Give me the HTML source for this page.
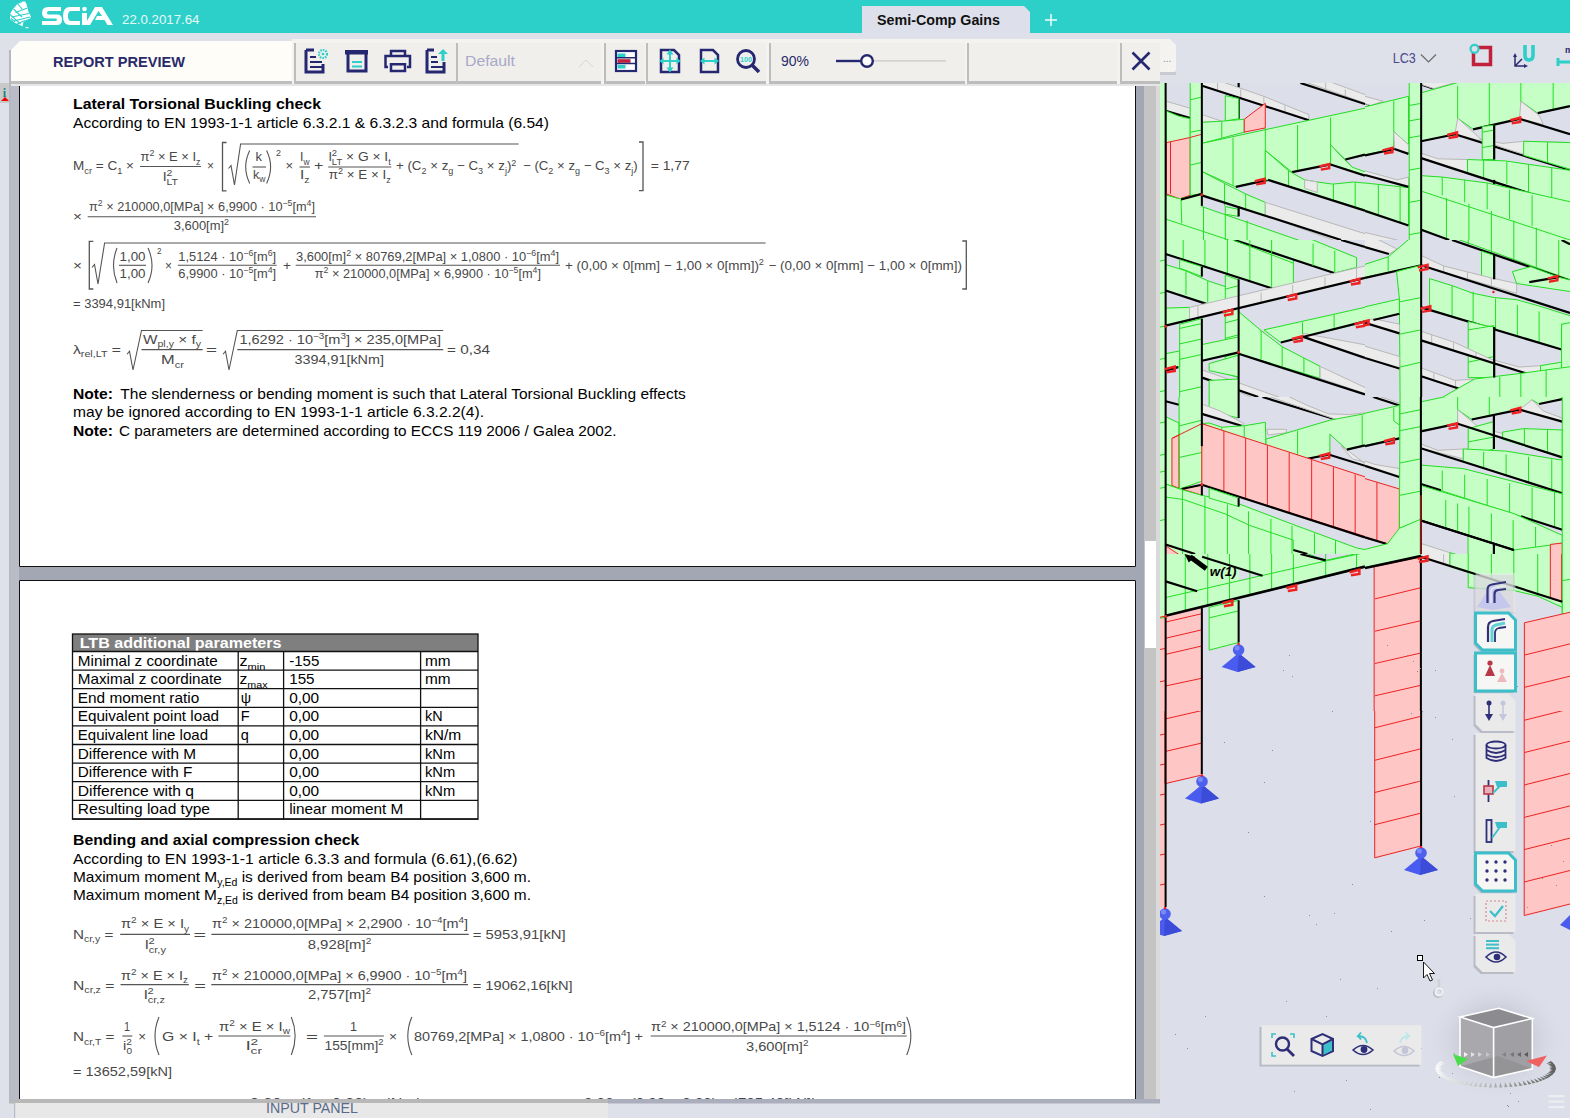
<!DOCTYPE html>
<html><head><meta charset="utf-8"><style>
html,body{margin:0;padding:0;width:1570px;height:1118px;overflow:hidden;background:#DEE0EA;}
svg{display:block;font-family:"Liberation Sans",sans-serif;}
</style></head><body>
<svg width="1570" height="1118" viewBox="0 0 1570 1118">
<rect x="1160" y="83" width="410" height="1035" fill="#DCDEE9" />
<clipPath id="cc1"><rect x="1160" y="83" width="205" height="157"/></clipPath>
<g clip-path="url(#cc1)"><g transform="translate(1160,83) scale(0.14041)">
<polyline points="560,0 560,255" fill="none" stroke="#000" stroke-width="2.2" vector-effect="non-scaling-stroke"/>
<polygon points="300,-20 410,-20 740,95 1060,225 1060,265 300,20" fill="#EBEBEB" stroke="#B8B8B8" stroke-width="1" vector-effect="non-scaling-stroke"/>
<polyline points="410,0 410,55" fill="none" stroke="#B8B8B8" stroke-width="1" vector-effect="non-scaling-stroke"/>
<polyline points="575,45 575,110" fill="none" stroke="#B8B8B8" stroke-width="1" vector-effect="non-scaling-stroke"/>
<polyline points="740,95 740,165" fill="none" stroke="#B8B8B8" stroke-width="1" vector-effect="non-scaling-stroke"/>
<polyline points="890,160 890,215" fill="none" stroke="#B8B8B8" stroke-width="1" vector-effect="non-scaling-stroke"/>
<polygon points="1180,-20 1480,90 1480,150 1000,-20" fill="#EBEBEB" stroke="#B8B8B8" stroke-width="1" vector-effect="non-scaling-stroke"/>
<polyline points="1180,0 1180,55" fill="none" stroke="#B8B8B8" stroke-width="1" vector-effect="non-scaling-stroke"/>
<polyline points="1320,45 1320,105" fill="none" stroke="#B8B8B8" stroke-width="1" vector-effect="non-scaling-stroke"/>
<polyline points="1000,0 1460,150" fill="none" stroke="#000" stroke-width="2.2" vector-effect="non-scaling-stroke"/>
<polyline points="300,20 1060,265" fill="none" stroke="#000" stroke-width="2.2" vector-effect="non-scaling-stroke"/>
<polygon points="45,130 215,180 215,255 45,200" fill="#EBEBEB" stroke="#B8B8B8" stroke-width="1" vector-effect="non-scaling-stroke"/>
<polyline points="45,200 215,250" fill="none" stroke="#000" stroke-width="2.2" vector-effect="non-scaling-stroke"/>
<polygon points="-20,-20 40,-20 40,1138 -20,1138" fill="#C6FFC6" stroke="#22DD22" stroke-width="1" vector-effect="non-scaling-stroke"/>
<polygon points="45,200 130,235 215,255 215,800 140,825 45,790" fill="#C6FFC6" stroke="#22DD22" stroke-width="1" vector-effect="non-scaling-stroke"/>
<polygon points="45,425 215,388 215,800 140,825 45,790" fill="#FFC6C6" stroke="#EE2222" stroke-width="1" vector-effect="non-scaling-stroke"/>
<polyline points="75,420 75,790" fill="none" stroke="#EE2222" stroke-width="1" vector-effect="non-scaling-stroke"/>
<polygon points="215,-20 298,-20 298,790 215,800" fill="#C6FFC6" stroke="#22DD22" stroke-width="1" vector-effect="non-scaling-stroke"/>
<polyline points="215,120 298,100" fill="none" stroke="#22DD22" stroke-width="1" vector-effect="non-scaling-stroke"/>
<polyline points="215,350 298,335" fill="none" stroke="#22DD22" stroke-width="1" vector-effect="non-scaling-stroke"/>
<polyline points="215,585 298,565" fill="none" stroke="#22DD22" stroke-width="1" vector-effect="non-scaling-stroke"/>
<polyline points="215,388 298,365" fill="none" stroke="#EE2222" stroke-width="1" vector-effect="non-scaling-stroke"/>
<polygon points="465,90 560,110 560,255 465,270" fill="#C6FFC6" stroke="#22DD22" stroke-width="1" vector-effect="non-scaling-stroke"/>
<polygon points="300,225 440,272 300,280" fill="#EBEBEB" stroke="#B8B8B8" stroke-width="1" vector-effect="non-scaling-stroke"/>
<polygon points="300,280 440,272 600,258 600,350 300,430" fill="#C6FFC6" stroke="#22DD22" stroke-width="1" vector-effect="non-scaling-stroke"/>
<polygon points="600,258 750,145 750,320 600,350" fill="#FFC6C6" stroke="#EE2222" stroke-width="1" vector-effect="non-scaling-stroke"/>
<polygon points="298,430 1480,175 1480,510 1320,545 1215,440 1215,580 940,635 750,480 750,690 540,740 298,630" fill="#C6FFC6" stroke="#22DD22" stroke-width="1" vector-effect="non-scaling-stroke"/>
<polyline points="440,272 440,390" fill="none" stroke="#22DD22" stroke-width="1" vector-effect="non-scaling-stroke"/>
<polyline points="520,390 520,730" fill="none" stroke="#22DD22" stroke-width="1" vector-effect="non-scaling-stroke"/>
<polyline points="980,300 980,630" fill="none" stroke="#22DD22" stroke-width="1" vector-effect="non-scaling-stroke"/>
<polygon points="1215,440 1370,600 1320,545 1215,580" fill="#EBEBEB" stroke="#B8B8B8" stroke-width="1" vector-effect="non-scaling-stroke"/>
<polygon points="1215,440 1280,510 1370,600 1480,640 1480,660 1215,580" fill="#C6FFC6" stroke="#22DD22" stroke-width="1" vector-effect="non-scaling-stroke"/>
<polyline points="540,740 770,690" fill="none" stroke="#000" stroke-width="2.2" vector-effect="non-scaling-stroke"/>
<polyline points="940,635 1215,580" fill="none" stroke="#000" stroke-width="2.2" vector-effect="non-scaling-stroke"/>
<polyline points="1320,545 1460,510" fill="none" stroke="#000" stroke-width="2.2" vector-effect="non-scaling-stroke"/>
<polygon points="750,480 915,625 1030,690 1120,705 1230,720 1380,705 1480,715 1480,910 770,690 750,690" fill="#C6FFC6" stroke="#22DD22" stroke-width="1" vector-effect="non-scaling-stroke"/>
<polygon points="1030,690 1120,705 1120,780 1030,750" fill="#EBEBEB" stroke="#B8B8B8" stroke-width="1" vector-effect="non-scaling-stroke"/>
<polyline points="915,625 915,735" fill="none" stroke="#22DD22" stroke-width="1" vector-effect="non-scaling-stroke"/>
<polyline points="1235,720 1235,830" fill="none" stroke="#22DD22" stroke-width="1" vector-effect="non-scaling-stroke"/>
<polyline points="1390,705 1390,880" fill="none" stroke="#22DD22" stroke-width="1" vector-effect="non-scaling-stroke"/>
<polyline points="750,320 750,480" fill="none" stroke="#22DD22" stroke-width="1" vector-effect="non-scaling-stroke"/>
<polyline points="1215,245 1215,440" fill="none" stroke="#22DD22" stroke-width="1" vector-effect="non-scaling-stroke"/>
<polyline points="770,690 1460,910" fill="none" stroke="#000" stroke-width="2.2" vector-effect="non-scaling-stroke"/>
<polyline points="1215,580 1460,660" fill="none" stroke="#000" stroke-width="2.2" vector-effect="non-scaling-stroke"/>
<polygon points="298,630 460,715 610,790 750,850 750,945 298,800" fill="#C6FFC6" stroke="#22DD22" stroke-width="1" vector-effect="non-scaling-stroke"/>
<polyline points="460,715 460,875" fill="none" stroke="#22DD22" stroke-width="1" vector-effect="non-scaling-stroke"/>
<polyline points="610,790 610,895" fill="none" stroke="#22DD22" stroke-width="1" vector-effect="non-scaling-stroke"/>
<polygon points="750,850 1480,1080 1480,1138 1290,1138 750,945" fill="#EBEBEB" stroke="#B8B8B8" stroke-width="1" vector-effect="non-scaling-stroke"/>
<polyline points="298,800 1290,1118" fill="none" stroke="#000" stroke-width="2.2" vector-effect="non-scaling-stroke"/>
<polygon points="40,797 140,825 298,790 298,880 1040,1138 40,1138" fill="#C6FFC6" stroke="#22DD22" stroke-width="1" vector-effect="non-scaling-stroke"/>
<polyline points="150,830 155,1000" fill="none" stroke="#22DD22" stroke-width="1" vector-effect="non-scaling-stroke"/>
<polyline points="40,969 490,1118" fill="none" stroke="#22DD22" stroke-width="1" vector-effect="non-scaling-stroke"/>
<polyline points="310,880 310,1118" fill="none" stroke="#22DD22" stroke-width="1" vector-effect="non-scaling-stroke"/>
<polyline points="465,930 465,1118" fill="none" stroke="#22DD22" stroke-width="1" vector-effect="non-scaling-stroke"/>
<polyline points="620,980 620,1118" fill="none" stroke="#22DD22" stroke-width="1" vector-effect="non-scaling-stroke"/>
<polygon points="465,880 560,900 560,950 465,935" fill="#C6FFC6" stroke="#22DD22" stroke-width="1" vector-effect="non-scaling-stroke"/>
<polyline points="150,830 298,790" fill="none" stroke="#000" stroke-width="2.2" vector-effect="non-scaling-stroke"/>
<polyline points="40,0 40,1118" fill="none" stroke="#000" stroke-width="2.0" vector-effect="non-scaling-stroke"/>
<polyline points="298,0 298,875" fill="none" stroke="#000" stroke-width="2.0" vector-effect="non-scaling-stroke"/>
<polyline points="560,880 560,950" fill="none" stroke="#000" stroke-width="2.2" vector-effect="non-scaling-stroke"/>
<path d="M675,700 L745,682 L745,712 L685,722" fill="none" stroke="#EE2222" stroke-width="2.5" vector-effect="non-scaling-stroke"/>
<path d="M1135,595 L1205,577 L1205,607 L1145,617" fill="none" stroke="#EE2222" stroke-width="2.5" vector-effect="non-scaling-stroke"/>
<circle cx="298" cy="795" r="10" fill="#E22"/>
</g></g>
<clipPath id="cc2"><rect x="1365" y="83" width="205" height="157"/></clipPath>
<g clip-path="url(#cc2)"><g transform="translate(1365,83) scale(0.14041)">
<polyline points="400,10 490,40" fill="none" stroke="#000" stroke-width="2.2" vector-effect="non-scaling-stroke"/>
<polyline points="0,140 40,160" fill="none" stroke="#000" stroke-width="2.2" vector-effect="non-scaling-stroke"/>
<polygon points="-20,90 130,130 40,160 -20,140" fill="#EBEBEB" stroke="#B8B8B8" stroke-width="1" vector-effect="non-scaling-stroke"/>
<polygon points="400,-20 700,-20 490,40 400,10" fill="#EBEBEB" stroke="#B8B8B8" stroke-width="1" vector-effect="non-scaling-stroke"/>
<polygon points="-20,175 310,95 310,440 205,345 205,470 -20,515" fill="#C6FFC6" stroke="#22DD22" stroke-width="1" vector-effect="non-scaling-stroke"/>
<polygon points="205,345 310,440 310,505 210,470" fill="#EBEBEB" stroke="#B8B8B8" stroke-width="1" vector-effect="non-scaling-stroke"/>
<polyline points="205,125 205,345" fill="none" stroke="#22DD22" stroke-width="1" vector-effect="non-scaling-stroke"/>
<polyline points="0,515 210,470" fill="none" stroke="#000" stroke-width="2.2" vector-effect="non-scaling-stroke"/>
<polyline points="210,470 310,505" fill="none" stroke="#000" stroke-width="2.2" vector-effect="non-scaling-stroke"/>
<polygon points="400,70 720,-20 1480,-20 1480,165 1230,215 1110,130 1110,255 770,330 660,250 660,365 400,415" fill="#C6FFC6" stroke="#22DD22" stroke-width="1" vector-effect="non-scaling-stroke"/>
<polygon points="660,250 820,395 820,410 640,365" fill="#EBEBEB" stroke="#B8B8B8" stroke-width="1" vector-effect="non-scaling-stroke"/>
<polygon points="1110,130 1240,230 1270,295 1100,255" fill="#EBEBEB" stroke="#B8B8B8" stroke-width="1" vector-effect="non-scaling-stroke"/>
<polyline points="660,20 660,250" fill="none" stroke="#22DD22" stroke-width="1" vector-effect="non-scaling-stroke"/>
<polyline points="885,0 885,300" fill="none" stroke="#22DD22" stroke-width="1" vector-effect="non-scaling-stroke"/>
<polyline points="1110,0 1110,130" fill="none" stroke="#22DD22" stroke-width="1" vector-effect="non-scaling-stroke"/>
<polyline points="1340,0 1340,190" fill="none" stroke="#22DD22" stroke-width="1" vector-effect="non-scaling-stroke"/>
<polyline points="400,415 640,365" fill="none" stroke="#000" stroke-width="2.2" vector-effect="non-scaling-stroke"/>
<polyline points="770,330 1100,255" fill="none" stroke="#000" stroke-width="2.2" vector-effect="non-scaling-stroke"/>
<polyline points="1230,215 1460,165" fill="none" stroke="#000" stroke-width="2.2" vector-effect="non-scaling-stroke"/>
<polyline points="640,365 1460,620" fill="none" stroke="#000" stroke-width="2.2" vector-effect="non-scaling-stroke"/>
<polyline points="1100,255 1460,365" fill="none" stroke="#000" stroke-width="2.2" vector-effect="non-scaling-stroke"/>
<polygon points="820,400 980,430 1130,415 1480,425 1480,620 980,460" fill="#EBEBEB" stroke="#B8B8B8" stroke-width="1" vector-effect="non-scaling-stroke"/>
<polygon points="1130,415 1480,425 1480,620 1130,515" fill="#C6FFC6" stroke="#22DD22" stroke-width="1" vector-effect="non-scaling-stroke"/>
<polyline points="1300,420 1300,565" fill="none" stroke="#22DD22" stroke-width="1" vector-effect="non-scaling-stroke"/>
<polygon points="835,310 920,300 920,545 835,545" fill="#C6FFC6" stroke="#22DD22" stroke-width="1" vector-effect="non-scaling-stroke"/>
<polyline points="835,350 920,335" fill="none" stroke="#22DD22" stroke-width="1" vector-effect="non-scaling-stroke"/>
<polyline points="835,460 920,445" fill="none" stroke="#22DD22" stroke-width="1" vector-effect="non-scaling-stroke"/>
<polygon points="400,500 520,540 730,545 730,645 400,535" fill="#EBEBEB" stroke="#B8B8B8" stroke-width="1" vector-effect="non-scaling-stroke"/>
<polygon points="730,545 1000,555 1480,625 1480,880 730,645" fill="#C6FFC6" stroke="#22DD22" stroke-width="1" vector-effect="non-scaling-stroke"/>
<polyline points="845,548 845,680" fill="none" stroke="#22DD22" stroke-width="1" vector-effect="non-scaling-stroke"/>
<polyline points="1010,560 1010,720" fill="none" stroke="#22DD22" stroke-width="1" vector-effect="non-scaling-stroke"/>
<polyline points="1165,580 1165,775" fill="none" stroke="#22DD22" stroke-width="1" vector-effect="non-scaling-stroke"/>
<polyline points="1330,605 1330,835" fill="none" stroke="#22DD22" stroke-width="1" vector-effect="non-scaling-stroke"/>
<polyline points="400,535 1460,880" fill="none" stroke="#000" stroke-width="2.2" vector-effect="non-scaling-stroke"/>
<polygon points="400,660 550,670 870,712 1480,850 1480,1138 640,1138 400,1040" fill="#C6FFC6" stroke="#22DD22" stroke-width="1" vector-effect="non-scaling-stroke"/>
<polyline points="550,670 550,800" fill="none" stroke="#22DD22" stroke-width="1" vector-effect="non-scaling-stroke"/>
<polyline points="710,690 710,850" fill="none" stroke="#22DD22" stroke-width="1" vector-effect="non-scaling-stroke"/>
<polyline points="870,712 870,900" fill="none" stroke="#22DD22" stroke-width="1" vector-effect="non-scaling-stroke"/>
<polyline points="400,770 1460,1118" fill="none" stroke="#22DD22" stroke-width="1" vector-effect="non-scaling-stroke"/>
<polyline points="1030,760 1030,970" fill="none" stroke="#22DD22" stroke-width="1" vector-effect="non-scaling-stroke"/>
<polyline points="1190,800 1190,1020" fill="none" stroke="#22DD22" stroke-width="1" vector-effect="non-scaling-stroke"/>
<polyline points="580,820 580,1118" fill="none" stroke="#22DD22" stroke-width="1" vector-effect="non-scaling-stroke"/>
<polyline points="740,860 740,1118" fill="none" stroke="#22DD22" stroke-width="1" vector-effect="non-scaling-stroke"/>
<polyline points="900,910 900,1118" fill="none" stroke="#22DD22" stroke-width="1" vector-effect="non-scaling-stroke"/>
<polyline points="1060,980 1060,1118" fill="none" stroke="#22DD22" stroke-width="1" vector-effect="non-scaling-stroke"/>
<polyline points="1220,1030 1220,1118" fill="none" stroke="#22DD22" stroke-width="1" vector-effect="non-scaling-stroke"/>
<polygon points="-20,620 230,690 310,670 310,740 -20,655" fill="#EBEBEB" stroke="#B8B8B8" stroke-width="1" vector-effect="non-scaling-stroke"/>
<polygon points="-20,710 310,745 310,1015 -20,910" fill="#C6FFC6" stroke="#22DD22" stroke-width="1" vector-effect="non-scaling-stroke"/>
<polyline points="95,725 95,940" fill="none" stroke="#22DD22" stroke-width="1" vector-effect="non-scaling-stroke"/>
<polyline points="250,740 250,990" fill="none" stroke="#22DD22" stroke-width="1" vector-effect="non-scaling-stroke"/>
<polygon points="-20,1060 310,1138 -20,1138" fill="#EBEBEB" stroke="#B8B8B8" stroke-width="1" vector-effect="non-scaling-stroke"/>
<polyline points="0,655 310,740" fill="none" stroke="#000" stroke-width="2.2" vector-effect="non-scaling-stroke"/>
<polyline points="0,910 310,1015" fill="none" stroke="#000" stroke-width="2.2" vector-effect="non-scaling-stroke"/>
<polyline points="400,1045 600,1118" fill="none" stroke="#000" stroke-width="2.2" vector-effect="non-scaling-stroke"/>
<polygon points="315,-20 400,-20 400,1138 315,1138" fill="#C6FFC6" stroke="#22DD22" stroke-width="1" vector-effect="non-scaling-stroke"/>
<polyline points="315,160 400,145" fill="none" stroke="#22DD22" stroke-width="1" vector-effect="non-scaling-stroke"/>
<polyline points="315,270 400,255" fill="none" stroke="#22DD22" stroke-width="1" vector-effect="non-scaling-stroke"/>
<polyline points="315,390 400,375" fill="none" stroke="#22DD22" stroke-width="1" vector-effect="non-scaling-stroke"/>
<polyline points="315,620 400,605" fill="none" stroke="#22DD22" stroke-width="1" vector-effect="non-scaling-stroke"/>
<polyline points="315,850 400,835" fill="none" stroke="#22DD22" stroke-width="1" vector-effect="non-scaling-stroke"/>
<polyline points="315,1080 400,1065" fill="none" stroke="#22DD22" stroke-width="1" vector-effect="non-scaling-stroke"/>
<polyline points="400,0 400,1118" fill="none" stroke="#000" stroke-width="2.0" vector-effect="non-scaling-stroke"/>
<polyline points="920,300 920,545" fill="none" stroke="#000" stroke-width="2.2" vector-effect="non-scaling-stroke"/>
<polyline points="920,690 920,720" fill="none" stroke="#000" stroke-width="2.2" vector-effect="non-scaling-stroke"/>
<path d="M125,480 L195,462 L195,492 L135,502" fill="none" stroke="#EE2222" stroke-width="2.5" vector-effect="non-scaling-stroke"/>
<path d="M585,370 L655,352 L655,382 L595,392" fill="none" stroke="#EE2222" stroke-width="2.5" vector-effect="non-scaling-stroke"/>
<path d="M1035,265 L1105,247 L1105,277 L1045,287" fill="none" stroke="#EE2222" stroke-width="2.5" vector-effect="non-scaling-stroke"/>
</g></g>
<clipPath id="cc3"><rect x="1160" y="240" width="205" height="157"/></clipPath>
<g clip-path="url(#cc3)"><g transform="translate(1160,240) scale(0.14041)">
<polygon points="-20,-20 40,-20 40,1138 -20,1138" fill="#C6FFC6" stroke="#22DD22" stroke-width="1" vector-effect="non-scaling-stroke"/>
<polyline points="0,150 40,142" fill="none" stroke="#22DD22" stroke-width="1" vector-effect="non-scaling-stroke"/>
<polyline points="0,380 40,372" fill="none" stroke="#22DD22" stroke-width="1" vector-effect="non-scaling-stroke"/>
<polyline points="0,620 40,612" fill="none" stroke="#22DD22" stroke-width="1" vector-effect="non-scaling-stroke"/>
<polyline points="0,850 40,842" fill="none" stroke="#22DD22" stroke-width="1" vector-effect="non-scaling-stroke"/>
<polyline points="0,1080 40,1072" fill="none" stroke="#22DD22" stroke-width="1" vector-effect="non-scaling-stroke"/>
<polyline points="1290,0 1460,50" fill="none" stroke="#000" stroke-width="2.2" vector-effect="non-scaling-stroke"/>
<polygon points="40,-20 1040,-20 1400,125 1400,195 1240,235 950,140 950,320 800,345 40,100" fill="#C6FFC6" stroke="#22DD22" stroke-width="1" vector-effect="non-scaling-stroke"/>
<polyline points="530,0 1240,235" fill="none" stroke="#000" stroke-width="2.2" vector-effect="non-scaling-stroke"/>
<polyline points="165,0 165,140" fill="none" stroke="#22DD22" stroke-width="1" vector-effect="non-scaling-stroke"/>
<polyline points="320,0 320,189" fill="none" stroke="#22DD22" stroke-width="1" vector-effect="non-scaling-stroke"/>
<polyline points="480,0 480,240" fill="none" stroke="#22DD22" stroke-width="1" vector-effect="non-scaling-stroke"/>
<polyline points="640,0 640,292" fill="none" stroke="#22DD22" stroke-width="1" vector-effect="non-scaling-stroke"/>
<polyline points="795,0 795,341" fill="none" stroke="#22DD22" stroke-width="1" vector-effect="non-scaling-stroke"/>
<polyline points="520,0 950,165" fill="none" stroke="#22DD22" stroke-width="1" vector-effect="non-scaling-stroke"/>
<polyline points="1090,25 1090,185" fill="none" stroke="#22DD22" stroke-width="1" vector-effect="non-scaling-stroke"/>
<polyline points="1245,75 1245,235" fill="none" stroke="#22DD22" stroke-width="1" vector-effect="non-scaling-stroke"/>
<polyline points="40,100 800,345" fill="none" stroke="#000" stroke-width="2.2" vector-effect="non-scaling-stroke"/>
<polygon points="140,140 298,190 298,260 140,200" fill="#C6FFC6" stroke="#22DD22" stroke-width="1" vector-effect="non-scaling-stroke"/>
<polygon points="40,175 185,220 340,290 490,340 490,430 330,455 40,360" fill="#C6FFC6" stroke="#22DD22" stroke-width="1" vector-effect="non-scaling-stroke"/>
<polyline points="185,220 185,390" fill="none" stroke="#22DD22" stroke-width="1" vector-effect="non-scaling-stroke"/>
<polyline points="340,290 340,445" fill="none" stroke="#22DD22" stroke-width="1" vector-effect="non-scaling-stroke"/>
<polyline points="40,360 330,455" fill="none" stroke="#000" stroke-width="2.2" vector-effect="non-scaling-stroke"/>
<polygon points="465,250 560,285 560,980 465,950" fill="#C6FFC6" stroke="#22DD22" stroke-width="1" vector-effect="non-scaling-stroke"/>
<polyline points="465,350 560,325" fill="none" stroke="#22DD22" stroke-width="1" vector-effect="non-scaling-stroke"/>
<polyline points="465,590 560,565" fill="none" stroke="#22DD22" stroke-width="1" vector-effect="non-scaling-stroke"/>
<polyline points="465,700 560,675" fill="none" stroke="#22DD22" stroke-width="1" vector-effect="non-scaling-stroke"/>
<polyline points="465,830 560,805" fill="none" stroke="#22DD22" stroke-width="1" vector-effect="non-scaling-stroke"/>
<polygon points="40,485 210,480 210,570 40,610" fill="#C6FFC6" stroke="#22DD22" stroke-width="1" vector-effect="non-scaling-stroke"/>
<polygon points="210,480 1480,180 1480,270 210,570" fill="#EBEBEB" stroke="#B8B8B8" stroke-width="1" vector-effect="non-scaling-stroke"/>
<polyline points="270,470 270,550" fill="none" stroke="#B8B8B8" stroke-width="1" vector-effect="non-scaling-stroke"/>
<polyline points="720,375 720,450" fill="none" stroke="#B8B8B8" stroke-width="1" vector-effect="non-scaling-stroke"/>
<polyline points="945,320 945,400" fill="none" stroke="#B8B8B8" stroke-width="1" vector-effect="non-scaling-stroke"/>
<polyline points="1175,265 1175,330" fill="none" stroke="#B8B8B8" stroke-width="1" vector-effect="non-scaling-stroke"/>
<polyline points="1400,195 1400,280" fill="none" stroke="#B8B8B8" stroke-width="1" vector-effect="non-scaling-stroke"/>
<polyline points="40,610 1460,270" fill="none" stroke="#000" stroke-width="2.2" vector-effect="non-scaling-stroke"/>
<polygon points="140,600 298,560 298,1138 140,1138" fill="#C6FFC6" stroke="#22DD22" stroke-width="1" vector-effect="non-scaling-stroke"/>
<polyline points="140,630 298,595" fill="none" stroke="#22DD22" stroke-width="1" vector-effect="non-scaling-stroke"/>
<polyline points="140,740 298,705" fill="none" stroke="#22DD22" stroke-width="1" vector-effect="non-scaling-stroke"/>
<polyline points="140,850 298,815" fill="none" stroke="#22DD22" stroke-width="1" vector-effect="non-scaling-stroke"/>
<polyline points="140,1080 298,1045" fill="none" stroke="#22DD22" stroke-width="1" vector-effect="non-scaling-stroke"/>
<polygon points="40,810 140,790 140,900 40,930" fill="#C6FFC6" stroke="#22DD22" stroke-width="1" vector-effect="non-scaling-stroke"/>
<polygon points="298,745 560,690 560,800 300,860" fill="#C6FFC6" stroke="#22DD22" stroke-width="1" vector-effect="non-scaling-stroke"/>
<polygon points="350,880 560,820 560,975 350,930" fill="#C6FFC6" stroke="#22DD22" stroke-width="1" vector-effect="non-scaling-stroke"/>
<polygon points="560,510 720,645 870,760 1140,900 1140,985 560,810" fill="#C6FFC6" stroke="#22DD22" stroke-width="1" vector-effect="non-scaling-stroke"/>
<polyline points="720,645 720,850" fill="none" stroke="#22DD22" stroke-width="1" vector-effect="non-scaling-stroke"/>
<polyline points="870,760 870,900" fill="none" stroke="#22DD22" stroke-width="1" vector-effect="non-scaling-stroke"/>
<polyline points="1025,840 1025,945" fill="none" stroke="#22DD22" stroke-width="1" vector-effect="non-scaling-stroke"/>
<polygon points="1140,900 1480,1060 1480,1100 1140,985" fill="#EBEBEB" stroke="#B8B8B8" stroke-width="1" vector-effect="non-scaling-stroke"/>
<polygon points="740,640 1480,475 1480,580 860,730" fill="#C6FFC6" stroke="#22DD22" stroke-width="1" vector-effect="non-scaling-stroke"/>
<polyline points="1015,585 1015,670" fill="none" stroke="#22DD22" stroke-width="1" vector-effect="non-scaling-stroke"/>
<polyline points="1240,530 1240,625" fill="none" stroke="#22DD22" stroke-width="1" vector-effect="non-scaling-stroke"/>
<polygon points="1020,665 1480,750 1480,840 1020,690" fill="#EBEBEB" stroke="#B8B8B8" stroke-width="1" vector-effect="non-scaling-stroke"/>
<polyline points="860,730 1460,580" fill="none" stroke="#000" stroke-width="2.2" vector-effect="non-scaling-stroke"/>
<polyline points="1020,690 1460,840" fill="none" stroke="#000" stroke-width="2.2" vector-effect="non-scaling-stroke"/>
<polyline points="300,860 560,800" fill="none" stroke="#000" stroke-width="2.2" vector-effect="non-scaling-stroke"/>
<polyline points="560,810 1460,1100" fill="none" stroke="#000" stroke-width="2.2" vector-effect="non-scaling-stroke"/>
<polygon points="300,925 900,1138 700,1138 300,980" fill="#EBEBEB" stroke="#B8B8B8" stroke-width="1" vector-effect="non-scaling-stroke"/>
<polyline points="300,980 700,1118" fill="none" stroke="#000" stroke-width="2.2" vector-effect="non-scaling-stroke"/>
<polygon points="350,1000 560,990 560,1138 350,1138" fill="#C6FFC6" stroke="#22DD22" stroke-width="1" vector-effect="non-scaling-stroke"/>
<polyline points="40,0 40,1118" fill="none" stroke="#000" stroke-width="2.0" vector-effect="non-scaling-stroke"/>
<polyline points="298,190 298,260" fill="none" stroke="#000" stroke-width="2.0" vector-effect="non-scaling-stroke"/>
<polyline points="298,560 298,1118" fill="none" stroke="#000" stroke-width="2.0" vector-effect="non-scaling-stroke"/>
<polyline points="560,280 560,1118" fill="none" stroke="#000" stroke-width="2.0" vector-effect="non-scaling-stroke"/>
<polyline points="40,930 130,905" fill="none" stroke="#000" stroke-width="2.2" vector-effect="non-scaling-stroke"/>
<path d="M445,515 L515,497 L515,527 L455,537" fill="none" stroke="#EE2222" stroke-width="2.5" vector-effect="non-scaling-stroke"/>
<path d="M900,405 L970,387 L970,417 L910,427" fill="none" stroke="#EE2222" stroke-width="2.5" vector-effect="non-scaling-stroke"/>
<path d="M1350,295 L1420,277 L1420,307 L1360,317" fill="none" stroke="#EE2222" stroke-width="2.5" vector-effect="non-scaling-stroke"/>
<path d="M940,705 L1010,687 L1010,717 L950,727" fill="none" stroke="#EE2222" stroke-width="2.5" vector-effect="non-scaling-stroke"/>
<path d="M1385,600 L1455,582 L1455,612 L1395,622" fill="none" stroke="#EE2222" stroke-width="2.5" vector-effect="non-scaling-stroke"/>
<path d="M35,920 L105,902 L105,932 L45,942" fill="none" stroke="#EE2222" stroke-width="2.5" vector-effect="non-scaling-stroke"/>
<circle cx="40" cy="615" r="10" fill="#E22"/><circle cx="560" cy="800" r="10" fill="#E22"/>
</g></g>
<clipPath id="cc4"><rect x="1365" y="240" width="205" height="157"/></clipPath>
<g clip-path="url(#cc4)"><g transform="translate(1365,240) scale(0.14041)">
<polygon points="620,-20 1480,-20 1480,290" fill="#C6FFC6" stroke="#22DD22" stroke-width="1" vector-effect="non-scaling-stroke"/>
<polyline points="735,0 735,39" fill="none" stroke="#22DD22" stroke-width="1" vector-effect="non-scaling-stroke"/>
<polyline points="900,0 900,96" fill="none" stroke="#22DD22" stroke-width="1" vector-effect="non-scaling-stroke"/>
<polyline points="1060,0 1060,151" fill="none" stroke="#22DD22" stroke-width="1" vector-effect="non-scaling-stroke"/>
<polyline points="1220,0 1220,206" fill="none" stroke="#22DD22" stroke-width="1" vector-effect="non-scaling-stroke"/>
<polyline points="1380,0 1380,262" fill="none" stroke="#22DD22" stroke-width="1" vector-effect="non-scaling-stroke"/>
<polyline points="620,0 1460,290" fill="none" stroke="#000" stroke-width="2.2" vector-effect="non-scaling-stroke"/>
<polyline points="1400,0 1460,30" fill="none" stroke="#000" stroke-width="2.2" vector-effect="non-scaling-stroke"/>
<polygon points="-20,-20 60,-20 230,65 170,100 -20,50" fill="#EBEBEB" stroke="#B8B8B8" stroke-width="1" vector-effect="non-scaling-stroke"/>
<polyline points="0,50 170,100" fill="none" stroke="#000" stroke-width="2.2" vector-effect="non-scaling-stroke"/>
<polygon points="-20,180 165,120 330,-20 400,-20 400,180 -20,270" fill="#C6FFC6" stroke="#22DD22" stroke-width="1" vector-effect="non-scaling-stroke"/>
<polyline points="165,120 165,220" fill="none" stroke="#22DD22" stroke-width="1" vector-effect="non-scaling-stroke"/>
<polyline points="0,270 400,180" fill="none" stroke="#000" stroke-width="2.2" vector-effect="non-scaling-stroke"/>
<polygon points="830,80 920,110 920,280 830,290" fill="#C6FFC6" stroke="#22DD22" stroke-width="1" vector-effect="non-scaling-stroke"/>
<polygon points="400,110 560,185 900,270 1080,310 1080,380 400,180" fill="#EBEBEB" stroke="#B8B8B8" stroke-width="1" vector-effect="non-scaling-stroke"/>
<polyline points="560,185 560,225" fill="none" stroke="#B8B8B8" stroke-width="1" vector-effect="non-scaling-stroke"/>
<polyline points="730,230 730,290" fill="none" stroke="#B8B8B8" stroke-width="1" vector-effect="non-scaling-stroke"/>
<polyline points="900,270 900,340" fill="none" stroke="#B8B8B8" stroke-width="1" vector-effect="non-scaling-stroke"/>
<polygon points="1050,225 1180,190 1380,265 1480,290 1480,370 1080,310" fill="#C6FFC6" stroke="#22DD22" stroke-width="1" vector-effect="non-scaling-stroke"/>
<polyline points="400,180 1460,520" fill="none" stroke="#000" stroke-width="2.2" vector-effect="non-scaling-stroke"/>
<polyline points="1170,300 1380,265" fill="none" stroke="#000" stroke-width="2.2" vector-effect="non-scaling-stroke"/>
<polygon points="460,275 620,325 770,380 920,410 1080,425 1240,470 1480,545 1480,600 1400,600 1400,780 460,500" fill="#C6FFC6" stroke="#22DD22" stroke-width="1" vector-effect="non-scaling-stroke"/>
<polyline points="620,323 620,548" fill="none" stroke="#22DD22" stroke-width="1" vector-effect="non-scaling-stroke"/>
<polyline points="770,368 770,593" fill="none" stroke="#22DD22" stroke-width="1" vector-effect="non-scaling-stroke"/>
<polyline points="930,416 930,641" fill="none" stroke="#22DD22" stroke-width="1" vector-effect="non-scaling-stroke"/>
<polyline points="1085,462 1085,687" fill="none" stroke="#22DD22" stroke-width="1" vector-effect="non-scaling-stroke"/>
<polyline points="1240,509 1240,734" fill="none" stroke="#22DD22" stroke-width="1" vector-effect="non-scaling-stroke"/>
<polyline points="400,480 1400,780" fill="none" stroke="#000" stroke-width="2.2" vector-effect="non-scaling-stroke"/>
<polygon points="735,580 860,610 920,620 920,980 735,980" fill="#C6FFC6" stroke="#22DD22" stroke-width="1" vector-effect="non-scaling-stroke"/>
<polyline points="735,640 920,610" fill="none" stroke="#22DD22" stroke-width="1" vector-effect="non-scaling-stroke"/>
<polyline points="735,870 920,830" fill="none" stroke="#22DD22" stroke-width="1" vector-effect="non-scaling-stroke"/>
<polygon points="225,225 400,180 400,1138 250,1138 245,420" fill="#C6FFC6" stroke="#22DD22" stroke-width="1" vector-effect="non-scaling-stroke"/>
<polyline points="250,440 400,410" fill="none" stroke="#22DD22" stroke-width="1" vector-effect="non-scaling-stroke"/>
<polyline points="250,670 400,640" fill="none" stroke="#22DD22" stroke-width="1" vector-effect="non-scaling-stroke"/>
<polyline points="250,905 400,870" fill="none" stroke="#22DD22" stroke-width="1" vector-effect="non-scaling-stroke"/>
<polygon points="-20,480 245,420 245,525 60,570 -20,580" fill="#C6FFC6" stroke="#22DD22" stroke-width="1" vector-effect="non-scaling-stroke"/>
<polygon points="60,560 245,600 245,665 -20,590" fill="#EBEBEB" stroke="#B8B8B8" stroke-width="1" vector-effect="non-scaling-stroke"/>
<polyline points="60,570 245,525" fill="none" stroke="#000" stroke-width="2.2" vector-effect="non-scaling-stroke"/>
<polyline points="0,590 245,665" fill="none" stroke="#000" stroke-width="2.2" vector-effect="non-scaling-stroke"/>
<polygon points="-20,750 245,830 245,915 -20,840" fill="#EBEBEB" stroke="#B8B8B8" stroke-width="1" vector-effect="non-scaling-stroke"/>
<polyline points="0,840 245,915" fill="none" stroke="#000" stroke-width="2.2" vector-effect="non-scaling-stroke"/>
<polygon points="400,650 640,730 900,850 1100,905 1250,895 1250,940 1180,960 400,715" fill="#EBEBEB" stroke="#B8B8B8" stroke-width="1" vector-effect="non-scaling-stroke"/>
<polyline points="475,675 475,735" fill="none" stroke="#B8B8B8" stroke-width="1" vector-effect="non-scaling-stroke"/>
<polyline points="630,730 630,790" fill="none" stroke="#B8B8B8" stroke-width="1" vector-effect="non-scaling-stroke"/>
<polyline points="790,800 790,840" fill="none" stroke="#B8B8B8" stroke-width="1" vector-effect="non-scaling-stroke"/>
<polyline points="400,715 1180,960" fill="none" stroke="#000" stroke-width="2.2" vector-effect="non-scaling-stroke"/>
<polygon points="1250,895 1400,870 1400,1138 1250,1138" fill="#C6FFC6" stroke="#22DD22" stroke-width="1" vector-effect="non-scaling-stroke"/>
<polygon points="1400,600 1480,585 1480,1138 1400,1138" fill="#C6FFC6" stroke="#22DD22" stroke-width="1" vector-effect="non-scaling-stroke"/>
<polygon points="400,910 640,1000 780,990 780,1060 720,1075 400,970" fill="#EBEBEB" stroke="#B8B8B8" stroke-width="1" vector-effect="non-scaling-stroke"/>
<polyline points="490,950 490,1000" fill="none" stroke="#B8B8B8" stroke-width="1" vector-effect="non-scaling-stroke"/>
<polyline points="645,1000 645,1060" fill="none" stroke="#B8B8B8" stroke-width="1" vector-effect="non-scaling-stroke"/>
<polyline points="400,970 720,1075" fill="none" stroke="#000" stroke-width="2.2" vector-effect="non-scaling-stroke"/>
<polygon points="780,990 1110,950 1480,900 1480,1138 520,1138" fill="#C6FFC6" stroke="#22DD22" stroke-width="1" vector-effect="non-scaling-stroke"/>
<polyline points="960,975 960,1118" fill="none" stroke="#22DD22" stroke-width="1" vector-effect="non-scaling-stroke"/>
<polyline points="1110,950 1110,1118" fill="none" stroke="#22DD22" stroke-width="1" vector-effect="non-scaling-stroke"/>
<polyline points="1290,925 1290,1118" fill="none" stroke="#22DD22" stroke-width="1" vector-effect="non-scaling-stroke"/>
<polyline points="400,0 400,1118" fill="none" stroke="#000" stroke-width="2.0" vector-effect="non-scaling-stroke"/>
<polyline points="920,100 920,280" fill="none" stroke="#000" stroke-width="2.2" vector-effect="non-scaling-stroke"/>
<polyline points="920,620 920,980" fill="none" stroke="#000" stroke-width="2.2" vector-effect="non-scaling-stroke"/>
<path d="M375,195 L445,177 L445,207 L385,217" fill="none" stroke="#EE2222" stroke-width="2.5" vector-effect="non-scaling-stroke"/>
<path d="M395,490 L465,472 L465,502 L405,512" fill="none" stroke="#EE2222" stroke-width="2.5" vector-effect="non-scaling-stroke"/>
<path d="M1300,275 L1370,257 L1370,287 L1310,297" fill="none" stroke="#EE2222" stroke-width="2.5" vector-effect="non-scaling-stroke"/>
<path d="M-45,590 L25,572 L25,602 L-35,612" fill="none" stroke="#EE2222" stroke-width="2.5" vector-effect="non-scaling-stroke"/>
<circle cx="915" cy="370" r="9" fill="#E22"/>
</g></g>
<clipPath id="cc5"><rect x="1160" y="397" width="205" height="157"/></clipPath>
<g clip-path="url(#cc5)"><g transform="translate(1160,397) scale(0.14041)">
<polygon points="-20,-20 40,-20 40,1138 -20,1138" fill="#C6FFC6" stroke="#22DD22" stroke-width="1" vector-effect="non-scaling-stroke"/>
<polyline points="0,185 40,177" fill="none" stroke="#22DD22" stroke-width="1" vector-effect="non-scaling-stroke"/>
<polyline points="0,415 40,407" fill="none" stroke="#22DD22" stroke-width="1" vector-effect="non-scaling-stroke"/>
<polyline points="0,535 40,527" fill="none" stroke="#22DD22" stroke-width="1" vector-effect="non-scaling-stroke"/>
<polyline points="0,650 40,642" fill="none" stroke="#22DD22" stroke-width="1" vector-effect="non-scaling-stroke"/>
<polyline points="0,880 40,872" fill="none" stroke="#22DD22" stroke-width="1" vector-effect="non-scaling-stroke"/>
<polyline points="730,0 1270,165" fill="none" stroke="#000" stroke-width="2.2" vector-effect="non-scaling-stroke"/>
<polygon points="880,-20 1050,60 1200,120 1350,125 1480,110 1480,130 1270,165 730,-20" fill="#EBEBEB" stroke="#B8B8B8" stroke-width="1" vector-effect="non-scaling-stroke"/>
<polygon points="760,230 900,230 900,255 770,270" fill="#EBEBEB" stroke="#B8B8B8" stroke-width="1" vector-effect="non-scaling-stroke"/>
<polygon points="350,-20 560,-20 560,150 350,100" fill="#C6FFC6" stroke="#22DD22" stroke-width="1" vector-effect="non-scaling-stroke"/>
<polygon points="298,50 430,100 600,190 580,205 298,120" fill="#EBEBEB" stroke="#B8B8B8" stroke-width="1" vector-effect="non-scaling-stroke"/>
<polyline points="298,120 580,205" fill="none" stroke="#000" stroke-width="2.2" vector-effect="non-scaling-stroke"/>
<polyline points="40,30 135,55" fill="none" stroke="#000" stroke-width="2.2" vector-effect="non-scaling-stroke"/>
<polyline points="40,290 90,300" fill="none" stroke="#000" stroke-width="2.2" vector-effect="non-scaling-stroke"/>
<polygon points="298,190 350,185 440,215 600,205 750,180 755,345" fill="#C6FFC6" stroke="#22DD22" stroke-width="1" vector-effect="non-scaling-stroke"/>
<polyline points="600,205 600,290" fill="none" stroke="#22DD22" stroke-width="1" vector-effect="non-scaling-stroke"/>
<polyline points="440,215 440,240" fill="none" stroke="#22DD22" stroke-width="1" vector-effect="non-scaling-stroke"/>
<polygon points="755,300 1210,165 1480,115 1480,345 1330,375 1210,265 1210,410 1050,440 755,345" fill="#C6FFC6" stroke="#22DD22" stroke-width="1" vector-effect="non-scaling-stroke"/>
<polyline points="980,240 980,420" fill="none" stroke="#22DD22" stroke-width="1" vector-effect="non-scaling-stroke"/>
<polyline points="1440,130 1440,350" fill="none" stroke="#22DD22" stroke-width="1" vector-effect="non-scaling-stroke"/>
<polygon points="1290,350 1370,440 1480,470 1480,490 1330,375" fill="#EBEBEB" stroke="#B8B8B8" stroke-width="1" vector-effect="non-scaling-stroke"/>
<polyline points="1050,440 1200,410" fill="none" stroke="#000" stroke-width="2.2" vector-effect="non-scaling-stroke"/>
<polyline points="1330,375 1460,345" fill="none" stroke="#000" stroke-width="2.2" vector-effect="non-scaling-stroke"/>
<polyline points="1200,410 1460,490" fill="none" stroke="#000" stroke-width="2.2" vector-effect="non-scaling-stroke"/>
<polygon points="40,140 135,185 135,650 40,620" fill="#C6FFC6" stroke="#22DD22" stroke-width="1" vector-effect="non-scaling-stroke"/>
<polygon points="85,295 135,270 135,650 85,630" fill="#FFC6C6" stroke="#EE2222" stroke-width="1" vector-effect="non-scaling-stroke"/>
<polygon points="135,-20 298,-20 298,600 140,655" fill="#C6FFC6" stroke="#22DD22" stroke-width="1" vector-effect="non-scaling-stroke"/>
<polyline points="140,205 298,165" fill="none" stroke="#22DD22" stroke-width="1" vector-effect="non-scaling-stroke"/>
<polyline points="140,430 298,395" fill="none" stroke="#22DD22" stroke-width="1" vector-effect="non-scaling-stroke"/>
<polyline points="85,295 298,190" fill="none" stroke="#EE2222" stroke-width="1" vector-effect="non-scaling-stroke"/>
<polygon points="298,190 1480,575 1480,1000 298,625" fill="#FFC6C6" stroke="#EE2222" stroke-width="1" vector-effect="non-scaling-stroke"/>
<polyline points="455,241 455,675" fill="none" stroke="#EE2222" stroke-width="1" vector-effect="non-scaling-stroke"/>
<polyline points="610,293 610,725" fill="none" stroke="#EE2222" stroke-width="1" vector-effect="non-scaling-stroke"/>
<polyline points="765,344 765,775" fill="none" stroke="#EE2222" stroke-width="1" vector-effect="non-scaling-stroke"/>
<polyline points="920,395 920,825" fill="none" stroke="#EE2222" stroke-width="1" vector-effect="non-scaling-stroke"/>
<polyline points="1080,448 1080,877" fill="none" stroke="#EE2222" stroke-width="1" vector-effect="non-scaling-stroke"/>
<polyline points="1235,500 1235,927" fill="none" stroke="#EE2222" stroke-width="1" vector-effect="non-scaling-stroke"/>
<polyline points="1390,551 1390,977" fill="none" stroke="#EE2222" stroke-width="1" vector-effect="non-scaling-stroke"/>
<polygon points="155,655 298,625 298,700" fill="#FFC6C6" stroke="#EE2222" stroke-width="1" vector-effect="non-scaling-stroke"/>
<polyline points="298,625 1460,1000" fill="none" stroke="#000" stroke-width="2.2" vector-effect="non-scaling-stroke"/>
<polyline points="155,655 298,625" fill="none" stroke="#000" stroke-width="2.2" vector-effect="non-scaling-stroke"/>
<polygon points="40,620 155,660 298,700 560,760 940,905 1400,1075 1480,1090 1480,1138 40,1138" fill="#C6FFC6" stroke="#22DD22" stroke-width="1" vector-effect="non-scaling-stroke"/>
<polyline points="160,660 160,1118" fill="none" stroke="#22DD22" stroke-width="1" vector-effect="non-scaling-stroke"/>
<polyline points="320,712 320,1118" fill="none" stroke="#22DD22" stroke-width="1" vector-effect="non-scaling-stroke"/>
<polyline points="480,765 480,1118" fill="none" stroke="#22DD22" stroke-width="1" vector-effect="non-scaling-stroke"/>
<polyline points="630,815 630,1118" fill="none" stroke="#22DD22" stroke-width="1" vector-effect="non-scaling-stroke"/>
<polyline points="790,867 790,1118" fill="none" stroke="#22DD22" stroke-width="1" vector-effect="non-scaling-stroke"/>
<polyline points="940,917 940,1118" fill="none" stroke="#22DD22" stroke-width="1" vector-effect="non-scaling-stroke"/>
<polyline points="1100,970 1100,1118" fill="none" stroke="#22DD22" stroke-width="1" vector-effect="non-scaling-stroke"/>
<polyline points="1250,1019 1250,1118" fill="none" stroke="#22DD22" stroke-width="1" vector-effect="non-scaling-stroke"/>
<polyline points="37,712 167,730 465,833 642,916 949,1019" fill="none" stroke="#22DD22" stroke-width="1" vector-effect="non-scaling-stroke"/>
<polyline points="949,1019 949,1093" fill="none" stroke="#22DD22" stroke-width="1" vector-effect="non-scaling-stroke"/>
<polygon points="350,650 560,720 560,780 350,720" fill="#C6FFC6" stroke="#22DD22" stroke-width="1" vector-effect="non-scaling-stroke"/>
<polygon points="40,1060 160,1138 40,1138" fill="#FFC6C6" stroke="#EE2222" stroke-width="1" vector-effect="non-scaling-stroke"/>
<polyline points="40,1050 250,1118" fill="none" stroke="#000" stroke-width="2.2" vector-effect="non-scaling-stroke"/>
<polyline points="950,1090 1050,1118" fill="none" stroke="#000" stroke-width="2.2" vector-effect="non-scaling-stroke"/>
<polyline points="40,0 40,1118" fill="none" stroke="#000" stroke-width="2.0" vector-effect="non-scaling-stroke"/>
<polyline points="298,0 298,350" fill="none" stroke="#000" stroke-width="2.0" vector-effect="non-scaling-stroke"/>
<polyline points="298,620 298,700" fill="none" stroke="#000" stroke-width="2.0" vector-effect="non-scaling-stroke"/>
<polyline points="560,0 560,150" fill="none" stroke="#000" stroke-width="2.0" vector-effect="non-scaling-stroke"/>
<polyline points="560,720 560,780" fill="none" stroke="#000" stroke-width="2.0" vector-effect="non-scaling-stroke"/>
<path d="M1135,420 L1205,402 L1205,432 L1145,442" fill="none" stroke="#EE2222" stroke-width="2.5" vector-effect="non-scaling-stroke"/>
<circle cx="298" cy="625" r="10" fill="#E22"/>
</g></g>
<clipPath id="cc6"><rect x="1365" y="397" width="205" height="157"/></clipPath>
<g clip-path="url(#cc6)"><g transform="translate(1365,397) scale(0.14041)">
<polygon points="-20,-20 60,-20 245,45 245,60" fill="#EBEBEB" stroke="#B8B8B8" stroke-width="1" vector-effect="non-scaling-stroke"/>
<polyline points="60,0 245,60" fill="none" stroke="#000" stroke-width="2.2" vector-effect="non-scaling-stroke"/>
<polygon points="-20,120 245,60 245,295 -20,350" fill="#C6FFC6" stroke="#22DD22" stroke-width="1" vector-effect="non-scaling-stroke"/>
<polyline points="205,75 205,170" fill="none" stroke="#22DD22" stroke-width="1" vector-effect="non-scaling-stroke"/>
<polyline points="205,170 245,200" fill="none" stroke="#22DD22" stroke-width="1" vector-effect="non-scaling-stroke"/>
<polyline points="0,350 245,295" fill="none" stroke="#000" stroke-width="2.2" vector-effect="non-scaling-stroke"/>
<polygon points="-20,450 70,480 245,510 245,570 -20,490" fill="#EBEBEB" stroke="#B8B8B8" stroke-width="1" vector-effect="non-scaling-stroke"/>
<polyline points="0,490 245,570" fill="none" stroke="#000" stroke-width="2.2" vector-effect="non-scaling-stroke"/>
<polygon points="-20,575 245,655 245,980 160,1045 -20,1000" fill="#FFC6C6" stroke="#EE2222" stroke-width="1" vector-effect="non-scaling-stroke"/>
<polyline points="85,605 85,1020" fill="none" stroke="#EE2222" stroke-width="1" vector-effect="non-scaling-stroke"/>
<polyline points="0,1000 150,1045" fill="none" stroke="#000" stroke-width="2.2" vector-effect="non-scaling-stroke"/>
<polygon points="398,35 650,-20 1405,-20 1405,15 1240,50 1190,20 1190,70 1100,90 760,160 660,90 660,190 398,245" fill="#C6FFC6" stroke="#22DD22" stroke-width="1" vector-effect="non-scaling-stroke"/>
<polyline points="660,0 660,90" fill="none" stroke="#22DD22" stroke-width="1" vector-effect="non-scaling-stroke"/>
<polyline points="885,0 885,140" fill="none" stroke="#22DD22" stroke-width="1" vector-effect="non-scaling-stroke"/>
<polygon points="660,90 810,215 980,260 980,300 660,190" fill="#EBEBEB" stroke="#B8B8B8" stroke-width="1" vector-effect="non-scaling-stroke"/>
<polygon points="1190,20 1270,100 1405,150 1405,175 1100,90" fill="#EBEBEB" stroke="#B8B8B8" stroke-width="1" vector-effect="non-scaling-stroke"/>
<polyline points="398,245 660,190" fill="none" stroke="#000" stroke-width="2.2" vector-effect="non-scaling-stroke"/>
<polyline points="760,160 1100,90" fill="none" stroke="#000" stroke-width="2.2" vector-effect="non-scaling-stroke"/>
<polyline points="1240,50 1405,15" fill="none" stroke="#000" stroke-width="2.2" vector-effect="non-scaling-stroke"/>
<polyline points="1100,90 1405,175" fill="none" stroke="#000" stroke-width="2.2" vector-effect="non-scaling-stroke"/>
<polygon points="735,225 918,175 918,370 735,420" fill="#C6FFC6" stroke="#22DD22" stroke-width="1" vector-effect="non-scaling-stroke"/>
<polyline points="735,320 918,285" fill="none" stroke="#22DD22" stroke-width="1" vector-effect="non-scaling-stroke"/>
<polygon points="398,335 520,380 700,370 700,440 398,365" fill="#EBEBEB" stroke="#B8B8B8" stroke-width="1" vector-effect="non-scaling-stroke"/>
<polygon points="980,250 1130,225 1405,235 1405,430 980,300" fill="#C6FFC6" stroke="#22DD22" stroke-width="1" vector-effect="non-scaling-stroke"/>
<polyline points="1135,225 1135,340" fill="none" stroke="#22DD22" stroke-width="1" vector-effect="non-scaling-stroke"/>
<polyline points="1300,230 1300,390" fill="none" stroke="#22DD22" stroke-width="1" vector-effect="non-scaling-stroke"/>
<polyline points="660,190 1405,430" fill="none" stroke="#000" stroke-width="2.2" vector-effect="non-scaling-stroke"/>
<polygon points="700,370 1000,385 1405,450 1405,685 700,461" fill="#C6FFC6" stroke="#22DD22" stroke-width="1" vector-effect="non-scaling-stroke"/>
<polyline points="845,390 845,507" fill="none" stroke="#22DD22" stroke-width="1" vector-effect="non-scaling-stroke"/>
<polyline points="1005,408 1005,557" fill="none" stroke="#22DD22" stroke-width="1" vector-effect="non-scaling-stroke"/>
<polyline points="1165,426 1165,608" fill="none" stroke="#22DD22" stroke-width="1" vector-effect="non-scaling-stroke"/>
<polyline points="1330,444 1330,661" fill="none" stroke="#22DD22" stroke-width="1" vector-effect="non-scaling-stroke"/>
<polyline points="398,365 1405,685" fill="none" stroke="#000" stroke-width="2.2" vector-effect="non-scaling-stroke"/>
<polygon points="398,485 700,510 1405,690 1405,945 398,620" fill="#C6FFC6" stroke="#22DD22" stroke-width="1" vector-effect="non-scaling-stroke"/>
<polyline points="550,523 550,668" fill="none" stroke="#22DD22" stroke-width="1" vector-effect="non-scaling-stroke"/>
<polyline points="710,554 710,720" fill="none" stroke="#22DD22" stroke-width="1" vector-effect="non-scaling-stroke"/>
<polyline points="870,584 870,771" fill="none" stroke="#22DD22" stroke-width="1" vector-effect="non-scaling-stroke"/>
<polyline points="1030,615 1030,823" fill="none" stroke="#22DD22" stroke-width="1" vector-effect="non-scaling-stroke"/>
<polyline points="1190,645 1190,875" fill="none" stroke="#22DD22" stroke-width="1" vector-effect="non-scaling-stroke"/>
<polyline points="1350,675 1350,926" fill="none" stroke="#22DD22" stroke-width="1" vector-effect="non-scaling-stroke"/>
<polyline points="398,620 540,665" fill="none" stroke="#000" stroke-width="2.2" vector-effect="non-scaling-stroke"/>
<polyline points="1110,850 1405,945" fill="none" stroke="#000" stroke-width="2.2" vector-effect="non-scaling-stroke"/>
<polygon points="398,630 1060,830 1405,985 1405,1138 1060,1090 398,880" fill="#C6FFC6" stroke="#22DD22" stroke-width="1" vector-effect="non-scaling-stroke"/>
<polyline points="575,733 575,936" fill="none" stroke="#22DD22" stroke-width="1" vector-effect="non-scaling-stroke"/>
<polyline points="660,758 660,963" fill="none" stroke="#22DD22" stroke-width="1" vector-effect="non-scaling-stroke"/>
<polyline points="740,782 740,989" fill="none" stroke="#22DD22" stroke-width="1" vector-effect="non-scaling-stroke"/>
<polyline points="900,830 900,1040" fill="none" stroke="#22DD22" stroke-width="1" vector-effect="non-scaling-stroke"/>
<polyline points="1055,877 1055,1090" fill="none" stroke="#22DD22" stroke-width="1" vector-effect="non-scaling-stroke"/>
<polyline points="1215,925 1215,1141" fill="none" stroke="#22DD22" stroke-width="1" vector-effect="non-scaling-stroke"/>
<polygon points="398,1043 605,1109 605,1138 398,1138" fill="#EBEBEB" stroke="#B8B8B8" stroke-width="1" vector-effect="non-scaling-stroke"/>
<polygon points="605,1109 744,1148 1060,1090 1405,1043 1405,1138 605,1138" fill="#C6FFC6" stroke="#22DD22" stroke-width="1" vector-effect="non-scaling-stroke"/>
<polygon points="734,985 1060,1090 1060,1138 734,1138" fill="#C6FFC6" stroke="#22DD22" stroke-width="1" vector-effect="non-scaling-stroke"/>
<polyline points="398,880 1060,1090" fill="none" stroke="#000" stroke-width="2.2" vector-effect="non-scaling-stroke"/>
<polyline points="398,880 1060,1090" fill="none" stroke="#000" stroke-width="2.2" vector-effect="non-scaling-stroke"/>
<polygon points="1320,1050 1405,1040 1405,1138 1320,1138" fill="#FFC6C6" stroke="#EE2222" stroke-width="1" vector-effect="non-scaling-stroke"/>
<polygon points="250,-20 398,-20 398,880 245,935" fill="#C6FFC6" stroke="#22DD22" stroke-width="1" vector-effect="non-scaling-stroke"/>
<polyline points="250,120 398,90" fill="none" stroke="#22DD22" stroke-width="1" vector-effect="non-scaling-stroke"/>
<polyline points="250,240 398,210" fill="none" stroke="#22DD22" stroke-width="1" vector-effect="non-scaling-stroke"/>
<polyline points="250,470 398,440" fill="none" stroke="#22DD22" stroke-width="1" vector-effect="non-scaling-stroke"/>
<polyline points="250,700 398,670" fill="none" stroke="#22DD22" stroke-width="1" vector-effect="non-scaling-stroke"/>
<polygon points="-20,1090 160,1045 245,935 398,870 398,1138 -20,1138" fill="#C6FFC6" stroke="#22DD22" stroke-width="1" vector-effect="non-scaling-stroke"/>
<polygon points="1405,-20 1480,-20 1480,1138 1405,1138" fill="#C6FFC6" stroke="#22DD22" stroke-width="1" vector-effect="non-scaling-stroke"/>
<polyline points="398,0 398,1118" fill="none" stroke="#000" stroke-width="2.0" vector-effect="non-scaling-stroke"/>
<polyline points="398,700 398,1118" fill="none" stroke="#EE2222" stroke-width="1" vector-effect="non-scaling-stroke"/>
<polyline points="918,130 918,370" fill="none" stroke="#000" stroke-width="2.2" vector-effect="non-scaling-stroke"/>
<polyline points="918,1050 918,1118" fill="none" stroke="#000" stroke-width="2.2" vector-effect="non-scaling-stroke"/>
<path d="M135,315 L205,297 L205,327 L145,337" fill="none" stroke="#EE2222" stroke-width="2.5" vector-effect="non-scaling-stroke"/>
<path d="M585,205 L655,187 L655,217 L595,227" fill="none" stroke="#EE2222" stroke-width="2.5" vector-effect="non-scaling-stroke"/>
<path d="M1035,95 L1105,77 L1105,107 L1045,117" fill="none" stroke="#EE2222" stroke-width="2.5" vector-effect="non-scaling-stroke"/>
</g></g>
<clipPath id="cc7"><rect x="1160" y="554" width="205" height="157"/></clipPath>
<g clip-path="url(#cc7)"><g transform="translate(1160,554) scale(0.14041)">
<polygon points="-20,-20 298,-20 298,1160 -20,1160" fill="#FFC6C6" stroke="#EE2222" stroke-width="1" vector-effect="non-scaling-stroke"/>
<polygon points="-20,-20 40,-20 40,450 -20,460" fill="#C6FFC6" stroke="#22DD22" stroke-width="1" vector-effect="non-scaling-stroke"/>
<polyline points="40,485 298,425" fill="none" stroke="#EE2222" stroke-width="1" vector-effect="non-scaling-stroke"/>
<polyline points="40,600 298,540" fill="none" stroke="#EE2222" stroke-width="1" vector-effect="non-scaling-stroke"/>
<polyline points="40,715 298,655" fill="none" stroke="#EE2222" stroke-width="1" vector-effect="non-scaling-stroke"/>
<polyline points="40,940 298,885" fill="none" stroke="#EE2222" stroke-width="1" vector-effect="non-scaling-stroke"/>
<polyline points="0,450 40,442" fill="none" stroke="#EE2222" stroke-width="1" vector-effect="non-scaling-stroke"/>
<polyline points="0,680 40,672" fill="none" stroke="#EE2222" stroke-width="1" vector-effect="non-scaling-stroke"/>
<polyline points="0,910 40,902" fill="none" stroke="#EE2222" stroke-width="1" vector-effect="non-scaling-stroke"/>
<polygon points="40,-20 1000,-20 1180,45 1480,-20 1480,90 40,440" fill="#C6FFC6" stroke="#22DD22" stroke-width="1" vector-effect="non-scaling-stroke"/>
<polygon points="560,110 730,155 560,195" fill="#DCDEE9" stroke="none"/>
<polyline points="40,310 1180,50 1460,-10" fill="none" stroke="#22DD22" stroke-width="1" vector-effect="non-scaling-stroke"/>
<polyline points="180,0 180,405" fill="none" stroke="#22DD22" stroke-width="1" vector-effect="non-scaling-stroke"/>
<polyline points="340,0 340,365" fill="none" stroke="#22DD22" stroke-width="1" vector-effect="non-scaling-stroke"/>
<polyline points="495,0 495,327" fill="none" stroke="#22DD22" stroke-width="1" vector-effect="non-scaling-stroke"/>
<polyline points="640,0 640,291" fill="none" stroke="#22DD22" stroke-width="1" vector-effect="non-scaling-stroke"/>
<polyline points="795,0 795,253" fill="none" stroke="#22DD22" stroke-width="1" vector-effect="non-scaling-stroke"/>
<polyline points="950,0 950,215" fill="none" stroke="#22DD22" stroke-width="1" vector-effect="non-scaling-stroke"/>
<polyline points="1180,0 1180,158" fill="none" stroke="#22DD22" stroke-width="1" vector-effect="non-scaling-stroke"/>
<polyline points="1400,0 1400,104" fill="none" stroke="#22DD22" stroke-width="1" vector-effect="non-scaling-stroke"/>
<polyline points="300,20 730,155" fill="none" stroke="#000" stroke-width="2.2" vector-effect="non-scaling-stroke"/>
<polyline points="1000,0 1180,45" fill="none" stroke="#000" stroke-width="2.2" vector-effect="non-scaling-stroke"/>
<polyline points="40,195 265,265" fill="none" stroke="#000" stroke-width="2.2" vector-effect="non-scaling-stroke"/>
<polyline points="40,440 1460,90" fill="none" stroke="#000" stroke-width="2.6" vector-effect="non-scaling-stroke"/>
<polygon points="350,380 560,330 560,630 350,685" fill="#C6FFC6" stroke="#22DD22" stroke-width="1" vector-effect="non-scaling-stroke"/>
<polyline points="350,455 560,405" fill="none" stroke="#22DD22" stroke-width="1" vector-effect="non-scaling-stroke"/>
<polyline points="40,0 40,1118" fill="none" stroke="#000" stroke-width="2.0" vector-effect="non-scaling-stroke"/>
<polyline points="298,385 298,1118" fill="none" stroke="#000" stroke-width="2.0" vector-effect="non-scaling-stroke"/>
<polyline points="560,330 560,630" fill="none" stroke="#000" stroke-width="2.0" vector-effect="non-scaling-stroke"/>
<path d="M330,105 L215,20" stroke="#000" stroke-width="5" vector-effect="non-scaling-stroke"/><path d="M175,0 L250,20 L205,60 Z" fill="#000"/>
<text x="355" y="160" font-size="95" font-style="italic" font-weight="bold" fill="#000" font-family="Liberation Sans">w(1)</text>
<path d="M445,350 L515,332 L515,362 L455,372" fill="none" stroke="#EE2222" stroke-width="2.5" vector-effect="non-scaling-stroke"/>
<path d="M900,242 L970,224 L970,254 L910,264" fill="none" stroke="#EE2222" stroke-width="2.5" vector-effect="non-scaling-stroke"/>
<path d="M1350,130 L1420,112 L1420,142 L1360,152" fill="none" stroke="#EE2222" stroke-width="2.5" vector-effect="non-scaling-stroke"/>
<circle cx="40" cy="445" r="10" fill="#E22"/>
</g></g>
<clipPath id="cc8"><rect x="1365" y="554" width="205" height="157"/></clipPath>
<g clip-path="url(#cc8)"><g transform="translate(1365,554) scale(0.14041)">
<polygon points="-20,-20 398,-20 398,15 -20,100" fill="#C6FFC6" stroke="#22DD22" stroke-width="1" vector-effect="non-scaling-stroke"/>
<polygon points="400,-20 605,-20 605,90 400,28" fill="#EBEBEB" stroke="#B8B8B8" stroke-width="1" vector-effect="non-scaling-stroke"/>
<polyline points="560,0 560,75" fill="none" stroke="#B8B8B8" stroke-width="1" vector-effect="non-scaling-stroke"/>
<polygon points="605,-20 1480,-20 1480,420 1405,430 1405,340 605,90" fill="#C6FFC6" stroke="#22DD22" stroke-width="1" vector-effect="non-scaling-stroke"/>
<polyline points="735,0 735,127" fill="none" stroke="#22DD22" stroke-width="1" vector-effect="non-scaling-stroke"/>
<polyline points="900,0 900,179" fill="none" stroke="#22DD22" stroke-width="1" vector-effect="non-scaling-stroke"/>
<polyline points="1060,0 1060,230" fill="none" stroke="#22DD22" stroke-width="1" vector-effect="non-scaling-stroke"/>
<polyline points="1230,0 1230,284" fill="none" stroke="#22DD22" stroke-width="1" vector-effect="non-scaling-stroke"/>
<polygon points="735,125 1405,340 1405,380 1230,300 1060,260 735,240" fill="#C6FFC6" stroke="#22DD22" stroke-width="1" vector-effect="non-scaling-stroke"/>
<polyline points="1060,230 1060,260" fill="none" stroke="#22DD22" stroke-width="1" vector-effect="non-scaling-stroke"/>
<polyline points="1230,285 1230,300" fill="none" stroke="#22DD22" stroke-width="1" vector-effect="non-scaling-stroke"/>
<polygon points="1320,-20 1400,-20 1400,340 1320,315" fill="#FFC6C6" stroke="#EE2222" stroke-width="1" vector-effect="non-scaling-stroke"/>
<polygon points="1405,-20 1480,-20 1480,420 1405,430" fill="#C6FFC6" stroke="#22DD22" stroke-width="1" vector-effect="non-scaling-stroke"/>
<polyline points="1405,190 1460,180" fill="none" stroke="#22DD22" stroke-width="1" vector-effect="non-scaling-stroke"/>
<polygon points="65,90 398,20 398,1160 65,1160" fill="#FFC6C6" stroke="#EE2222" stroke-width="1" vector-effect="non-scaling-stroke"/>
<polyline points="70,320 398,240" fill="none" stroke="#EE2222" stroke-width="1" vector-effect="non-scaling-stroke"/>
<polyline points="70,550 398,475" fill="none" stroke="#EE2222" stroke-width="1" vector-effect="non-scaling-stroke"/>
<polyline points="70,780 398,705" fill="none" stroke="#EE2222" stroke-width="1" vector-effect="non-scaling-stroke"/>
<polyline points="70,1010 398,935" fill="none" stroke="#EE2222" stroke-width="1" vector-effect="non-scaling-stroke"/>
<polygon points="1135,490 1480,410 1480,1160 1135,1160" fill="#FFC6C6" stroke="#EE2222" stroke-width="1" vector-effect="non-scaling-stroke"/>
<polyline points="1135,720 1460,640" fill="none" stroke="#EE2222" stroke-width="1" vector-effect="non-scaling-stroke"/>
<polyline points="1135,950 1460,870" fill="none" stroke="#EE2222" stroke-width="1" vector-effect="non-scaling-stroke"/>
<polyline points="0,100 398,15" fill="none" stroke="#000" stroke-width="2.6" vector-effect="non-scaling-stroke"/>
<polyline points="398,20 1405,340" fill="none" stroke="#000" stroke-width="2.2" vector-effect="non-scaling-stroke"/>
<polyline points="398,20 398,1118" fill="none" stroke="#000" stroke-width="2.0" vector-effect="non-scaling-stroke"/>
<path d="M375,35 L445,17 L445,47 L385,57" fill="none" stroke="#EE2222" stroke-width="2.5" vector-effect="non-scaling-stroke"/>
</g></g>
<clipPath id="ccLow"><rect x="1160" y="711" width="410" height="407"/></clipPath><g clip-path="url(#ccLow)">
<polygon points="1160,705 1165,705 1165,907 1160,907" fill="#FFC6C6" stroke="none"/>
<polygon points="1165,705 1202,705 1202,775 1165,783.7" fill="#FFC6C6" stroke="none"/>
<polyline points="1165,705 1165,783.7 1202,775" fill="none" stroke="#EE2222" stroke-width="1" vector-effect="non-scaling-stroke"/>
<polyline points="1165,719 1202,710.5" fill="none" stroke="#EE2222" stroke-width="1" vector-effect="non-scaling-stroke"/>
<polyline points="1165,751.5 1202,743.0" fill="none" stroke="#EE2222" stroke-width="1" vector-effect="non-scaling-stroke"/>
<polyline points="1160,735 1165,734" fill="none" stroke="#EE2222" stroke-width="1" vector-effect="non-scaling-stroke"/>
<polyline points="1160,765 1165,764" fill="none" stroke="#EE2222" stroke-width="1" vector-effect="non-scaling-stroke"/>
<polyline points="1160,795 1165,794" fill="none" stroke="#EE2222" stroke-width="1" vector-effect="non-scaling-stroke"/>
<polyline points="1160,825 1165,824" fill="none" stroke="#EE2222" stroke-width="1" vector-effect="non-scaling-stroke"/>
<polyline points="1160,855 1165,854" fill="none" stroke="#EE2222" stroke-width="1" vector-effect="non-scaling-stroke"/>
<polyline points="1160,885 1165,884" fill="none" stroke="#EE2222" stroke-width="1" vector-effect="non-scaling-stroke"/>
<polygon points="1374.7,705 1420.8,705 1420.8,846 1374.7,857.8" fill="#FFC6C6" stroke="none"/>
<polyline points="1374.7,705 1374.7,857.8 1420.8,846" fill="none" stroke="#EE2222" stroke-width="1" vector-effect="non-scaling-stroke"/>
<polyline points="1374.7,727.8 1420.8,716.3" fill="none" stroke="#EE2222" stroke-width="1" vector-effect="non-scaling-stroke"/>
<polyline points="1374.7,760.3 1420.8,748.8" fill="none" stroke="#EE2222" stroke-width="1" vector-effect="non-scaling-stroke"/>
<polyline points="1374.7,792.5 1420.8,781.0" fill="none" stroke="#EE2222" stroke-width="1" vector-effect="non-scaling-stroke"/>
<polyline points="1374.7,824.7 1420.8,813.2" fill="none" stroke="#EE2222" stroke-width="1" vector-effect="non-scaling-stroke"/>
<polygon points="1524.2,705 1570,705 1570,904 1524.2,915.5" fill="#FFC6C6" stroke="none"/>
<polyline points="1524.2,705 1524.2,915.5 1570,904" fill="none" stroke="#EE2222" stroke-width="1" vector-effect="non-scaling-stroke"/>
<polyline points="1524.2,720.3 1570,708.8" fill="none" stroke="#EE2222" stroke-width="1" vector-effect="non-scaling-stroke"/>
<polyline points="1524.2,752.6 1570,741.1" fill="none" stroke="#EE2222" stroke-width="1" vector-effect="non-scaling-stroke"/>
<polyline points="1524.2,785 1570,773.5" fill="none" stroke="#EE2222" stroke-width="1" vector-effect="non-scaling-stroke"/>
<polyline points="1524.2,817.4 1570,805.9" fill="none" stroke="#EE2222" stroke-width="1" vector-effect="non-scaling-stroke"/>
<polyline points="1524.2,849.6 1570,838.1" fill="none" stroke="#EE2222" stroke-width="1" vector-effect="non-scaling-stroke"/>
<polyline points="1524.2,882 1570,870.5" fill="none" stroke="#EE2222" stroke-width="1" vector-effect="non-scaling-stroke"/>
<polyline points="1165.6,705 1165.6,907" fill="none" stroke="#000" stroke-width="2.0" vector-effect="non-scaling-stroke"/>
<polyline points="1201.8,705 1201.8,774" fill="none" stroke="#000" stroke-width="2.0" vector-effect="non-scaling-stroke"/>
<polyline points="1421.1,705 1421.1,846" fill="none" stroke="#000" stroke-width="2.0" vector-effect="non-scaling-stroke"/>
</g>
<rect x="1264" y="896" width="1" height="1" fill="#8A8C98"/>
<rect x="1316" y="924" width="1" height="1" fill="#8A8C98"/>
<rect x="1417" y="671" width="1" height="1" fill="#8A8C98"/>
<rect x="1175" y="1034" width="1" height="1" fill="#8A8C98"/>
<rect x="1272" y="750" width="1" height="1" fill="#8A8C98"/>
<rect x="1563" y="861" width="1" height="1" fill="#8A8C98"/>
<rect x="1500" y="864" width="1" height="1" fill="#8A8C98"/>
<rect x="1422" y="711" width="1" height="1" fill="#8A8C98"/>
<rect x="1421" y="1048" width="1" height="1" fill="#8A8C98"/>
<rect x="1377" y="988" width="1" height="1" fill="#8A8C98"/>
<rect x="1435" y="670" width="1" height="1" fill="#8A8C98"/>
<rect x="1470" y="918" width="1" height="1" fill="#8A8C98"/>
<rect x="1289" y="655" width="1" height="1" fill="#8A8C98"/>
<rect x="1512" y="862" width="1" height="1" fill="#8A8C98"/>
<rect x="1454" y="1053" width="1" height="1" fill="#8A8C98"/>
<rect x="1452" y="1073" width="1" height="1" fill="#8A8C98"/>
<rect x="1326" y="1016" width="1" height="1" fill="#8A8C98"/>
<rect x="1346" y="1080" width="1" height="1" fill="#8A8C98"/>
<rect x="1517" y="686" width="1" height="1" fill="#8A8C98"/>
<rect x="1224" y="742" width="1" height="1" fill="#8A8C98"/>
<rect x="1551" y="845" width="1" height="1" fill="#8A8C98"/>
<rect x="1418" y="781" width="1" height="1" fill="#8A8C98"/>
<rect x="1370" y="821" width="1" height="1" fill="#8A8C98"/>
<rect x="1309" y="915" width="1" height="1" fill="#8A8C98"/>
<rect x="1401" y="1065" width="1" height="1" fill="#8A8C98"/>
<rect x="1439" y="1077" width="1" height="1" fill="#8A8C98"/>
<rect x="1508" y="1106" width="1" height="1" fill="#8A8C98"/>
<rect x="1435" y="717" width="1" height="1" fill="#8A8C98"/>
<rect x="1510" y="1093" width="1" height="1" fill="#8A8C98"/>
<rect x="1527" y="907" width="1" height="1" fill="#8A8C98"/>
<rect x="1452" y="739" width="1" height="1" fill="#8A8C98"/>
<rect x="1498" y="910" width="1" height="1" fill="#8A8C98"/>
<rect x="1283" y="670" width="1" height="1" fill="#8A8C98"/>
<rect x="1507" y="1105" width="1" height="1" fill="#8A8C98"/>
<rect x="1205" y="1016" width="1" height="1" fill="#8A8C98"/>
<rect x="1332" y="711" width="1" height="1" fill="#8A8C98"/>
<rect x="1286" y="1001" width="1" height="1" fill="#8A8C98"/>
<rect x="1515" y="661" width="1" height="1" fill="#8A8C98"/>
<rect x="1413" y="661" width="1" height="1" fill="#8A8C98"/>
<rect x="1454" y="796" width="1" height="1" fill="#8A8C98"/>
<rect x="1518" y="1101" width="1" height="1" fill="#8A8C98"/>
<rect x="1370" y="1109" width="1" height="1" fill="#8A8C98"/>
<rect x="1292" y="676" width="1" height="1" fill="#8A8C98"/>
<rect x="1407" y="655" width="1" height="1" fill="#8A8C98"/>
<rect x="1248" y="832" width="1" height="1" fill="#8A8C98"/>
<rect x="1411" y="713" width="1" height="1" fill="#8A8C98"/>
<rect x="1187" y="1048" width="1" height="1" fill="#8A8C98"/>
<rect x="1294" y="1091" width="1" height="1" fill="#8A8C98"/>
<rect x="1524" y="818" width="1" height="1" fill="#8A8C98"/>
<rect x="1352" y="884" width="1" height="1" fill="#8A8C98"/>
<rect x="1424" y="920" width="1" height="1" fill="#8A8C98"/>
<rect x="1391" y="931" width="1" height="1" fill="#8A8C98"/>
<rect x="1542" y="878" width="1" height="1" fill="#8A8C98"/>
<rect x="1340" y="979" width="1" height="1" fill="#8A8C98"/>
<rect x="1264" y="782" width="1" height="1" fill="#8A8C98"/>
<rect x="1556" y="885" width="1" height="1" fill="#8A8C98"/>
<rect x="1387" y="645" width="1" height="1" fill="#8A8C98"/>
<rect x="1334" y="913" width="1" height="1" fill="#8A8C98"/>
<rect x="1178" y="929" width="1" height="1" fill="#8A8C98"/>
<rect x="1420" y="668" width="1" height="1" fill="#8A8C98"/>
<polygon points="1221.6,667.0 1238.6,653.0 1255.6,667.0 1237.6,672.0" fill="#4A5CF0"/>
<polygon points="1238.6,653.0 1255.6,667.0 1237.6,672.0" fill="#3C4CD8"/>
<circle cx="1238.6" cy="650.0" r="5.8" fill="#4D60EE"/>
<circle cx="1237.1" cy="648.0" r="2.5" fill="#7A8AF8"/>
<circle cx="1238.6" cy="644.0" r="1.3" fill="#E22"/>
<polygon points="1185.0,798.5 1202,784.5 1219.0,798.5 1201.0,803.5" fill="#4A5CF0"/>
<polygon points="1202,784.5 1219.0,798.5 1201.0,803.5" fill="#3C4CD8"/>
<circle cx="1202" cy="781.5" r="5.8" fill="#4D60EE"/>
<circle cx="1200.5" cy="779.5" r="2.5" fill="#7A8AF8"/>
<circle cx="1202" cy="775.5" r="1.3" fill="#E22"/>
<polygon points="1404.0,870.0 1421,856.0 1438.0,870.0 1420.0,875.0" fill="#4A5CF0"/>
<polygon points="1421,856.0 1438.0,870.0 1420.0,875.0" fill="#3C4CD8"/>
<circle cx="1421" cy="853.0" r="5.8" fill="#4D60EE"/>
<circle cx="1419.5" cy="851.0" r="2.5" fill="#7A8AF8"/>
<circle cx="1421" cy="847.0" r="1.3" fill="#E22"/>
<polygon points="1148.0,931.0 1165,917.0 1182.0,931.0 1164.0,936.0" fill="#4A5CF0"/>
<polygon points="1165,917.0 1182.0,931.0 1164.0,936.0" fill="#3C4CD8"/>
<circle cx="1165" cy="914.0" r="5.8" fill="#4D60EE"/>
<circle cx="1163.5" cy="912.0" r="2.5" fill="#7A8AF8"/>
<circle cx="1165" cy="908.0" r="1.3" fill="#E22"/>
<polygon points="1560,925 1570,915 1570,930" fill="#4A5CF0"/>
<polygon points="1473.5,575 1513.5,575 1513.5,575 1513.5,614 1473.5,614 1473.5,614" fill="#B9BBC6" opacity="0.55"/>
<polygon points="1475.5,573 1515.5,573 1515.5,573 1515.5,612 1475.5,612 1475.5,612" fill="#EAEAEA" opacity="0.55"/>
<polygon points="1473.5,615 1506.5,615 1513.5,622 1513.5,652 1480.5,652 1473.5,645" fill="#B9BBC6" opacity="1.0"/>
<polygon points="1475.5,613 1508.5,613 1515.5,620 1515.5,650 1482.5,650 1475.5,643" fill="#F6F6F4" opacity="1.0" stroke="#3CBFC9" stroke-width="3"/>
<polygon points="1473.5,655 1513.5,655 1513.5,655 1513.5,693 1473.5,693 1473.5,693" fill="#B9BBC6" opacity="1.0"/>
<polygon points="1475.5,653 1515.5,653 1515.5,653 1515.5,691 1475.5,691 1475.5,691" fill="#F6F6F4" opacity="1.0" stroke="#3CBFC9" stroke-width="3"/>
<polygon points="1473.5,696 1506.5,696 1513.5,703 1513.5,733 1480.5,733 1473.5,726" fill="#B9BBC6" opacity="1.0"/>
<polygon points="1475.5,694 1508.5,694 1515.5,701 1515.5,731 1482.5,731 1475.5,724" fill="#EAEAEA" opacity="1.0"/>
<polygon points="1473.5,735 1513.5,735 1513.5,853 1473.5,853" fill="#B9BBC6"/>
<polygon points="1475.5,733 1515.5,733 1515.5,851 1475.5,851" fill="#EAEAEA"/>
<polygon points="1473.5,855 1506.5,855 1513.5,862 1513.5,893 1480.5,893 1473.5,886" fill="#B9BBC6" opacity="1.0"/>
<polygon points="1475.5,853 1508.5,853 1515.5,860 1515.5,891 1482.5,891 1475.5,884" fill="#F6F6F4" opacity="1.0" stroke="#3CBFC9" stroke-width="3"/>
<polygon points="1473.5,896 1513.5,896 1513.5,896 1513.5,934 1473.5,934 1473.5,934" fill="#B9BBC6" opacity="1.0"/>
<polygon points="1475.5,894 1515.5,894 1515.5,894 1515.5,932 1475.5,932 1475.5,932" fill="#EAEAEA" opacity="1.0"/>
<polygon points="1473.5,936 1506.5,936 1513.5,943 1513.5,974 1480.5,974 1473.5,967" fill="#B9BBC6" opacity="1.0"/>
<polygon points="1475.5,934 1508.5,934 1515.5,941 1515.5,972 1482.5,972 1475.5,965" fill="#EAEAEA" opacity="1.0"/>
<polygon points="1477,607 1493,583 1511,607 1493,610" fill="#C5C7EC"/>
<path d="M1487.5,603 V590 Q1487.5,585 1492,584.5 L1506,582" fill="none" stroke="#34357E" stroke-width="2.2" />
<path d="M1491,603 V592 Q1491,588 1495,587.5 L1506,585.5" fill="none" stroke="#E8E8F2" stroke-width="1.4" />
<path d="M1494.5,603 V594 Q1494.5,590.5 1498,590 L1506,589" fill="none" stroke="#34357E" stroke-width="2.2" />
<path d="M1488,642 V627 Q1488,622 1493,621 L1505,619" fill="none" stroke="#2E2F78" stroke-width="2.2" />
<path d="M1492,642 V630 Q1492,626 1496,625 L1505,623" fill="none" stroke="#5FD3D3" stroke-width="3" />
<path d="M1495,642 V633 Q1495,629 1499,628 L1506,627" fill="none" stroke="#2E2F78" stroke-width="1.8" />
<circle cx="1490" cy="663" r="2.6" fill="#B83848"/><polygon points="1485,676 1490,665 1495,676" fill="#B83848"/>
<circle cx="1502" cy="671" r="2.4" fill="#EEB8BE"/><polygon points="1497,682 1502,673 1507,682" fill="#EEB8BE"/>
<circle cx="1489" cy="703" r="2.5" fill="#2E2F78"/><line x1="1489" y1="703" x2="1489" y2="717" stroke="#2E2F78" stroke-width="1.6"/><polygon points="1485,714 1489,721 1493,714" fill="#2E2F78"/>
<circle cx="1503" cy="703" r="2.5" fill="#C5C6DC"/><line x1="1503" y1="703" x2="1503" y2="717" stroke="#C5C6DC" stroke-width="1.6"/><polygon points="1499,714 1503,721 1507,714" fill="#C5C6DC"/>
<g fill="none" stroke="#2E2F78" stroke-width="1.8"><ellipse cx="1496" cy="745" rx="9.5" ry="3.5"/><path d="M1486.5,745 V758 Q1496,764 1505.5,758 V745 M1486.5,750 Q1496,756 1505.5,750 M1486.5,754.5 Q1496,760 1505.5,754.5"/></g>
<path d="M1488.5,780 V802" fill="none" stroke="#2E2F78" stroke-width="1.8" />
<rect x="1484" y="786" width="9" height="8" fill="#E8B0B8" stroke="#B83848" stroke-width="1.6"/>
<polygon points="1495,781 1507,781 1507,787 1497,787" fill="#3CBFC9"/><line x1="1493" y1="793" x2="1500" y2="786" stroke="#3CBFC9" stroke-width="1.8"/>
<rect x="1486.5" y="820" width="5" height="22" fill="none" stroke="#2E2F78" stroke-width="1.8"/>
<polygon points="1495,822 1507,822 1507,828 1497,828" fill="#3CBFC9"/><line x1="1492" y1="838" x2="1500" y2="827" stroke="#3CBFC9" stroke-width="1.8"/>
<circle cx="1487" cy="862" r="1.7" fill="#2E2F78"/>
<circle cx="1496" cy="862" r="1.7" fill="#2E2F78"/>
<circle cx="1505" cy="862" r="1.7" fill="#2E2F78"/>
<circle cx="1487" cy="871" r="1.7" fill="#2E2F78"/>
<circle cx="1496" cy="871" r="1.7" fill="#2E2F78"/>
<circle cx="1505" cy="871" r="1.7" fill="#2E2F78"/>
<circle cx="1487" cy="880" r="1.7" fill="#2E2F78"/>
<circle cx="1496" cy="880" r="1.7" fill="#2E2F78"/>
<circle cx="1505" cy="880" r="1.7" fill="#2E2F78"/>
<rect x="1486" y="901" width="20" height="20" fill="none" stroke="#D88894" stroke-width="1.2" stroke-dasharray="2 2"/>
<path d="M1490,911 L1495,916 L1503,906" fill="none" stroke="#3CBFC9" stroke-width="2.2" />
<rect x="1486" y="940.0" width="13" height="2" fill="#3CBFC9"/>
<rect x="1486" y="943.6" width="13" height="2" fill="#3CBFC9"/>
<rect x="1486" y="947.2" width="13" height="2" fill="#3CBFC9"/>
<path d="M1486,957 Q1496,947 1506,957 Q1496,967 1486,957 Z" fill="none" stroke="#2E2F78" stroke-width="1.6" />
<circle cx="1497" cy="957" r="3.3" fill="#2E2F78"/>
<rect x="1259.5" y="1027" width="160" height="39.5" fill="#B6B8C3"/>
<rect x="1261.5" y="1025.2" width="160" height="39.5" fill="#EAEAEA"/>
<path d="M1272,1038 V1034 H1276 M1290,1034 H1294 V1038 M1272,1052 V1056 H1276" fill="none" stroke="#3CBFC9" stroke-width="1.6" />
<circle cx="1282.5" cy="1044" r="6.5" fill="none" stroke="#2E2F78" stroke-width="2.4"/>
<path d="M1287,1049 L1294,1056" fill="none" stroke="#2E2F78" stroke-width="2.8" />
<path d="M1311.5,1039 L1322.5,1034 L1333,1039 V1051 L1322.5,1056 L1311.5,1051 Z" fill="none" stroke="#2E2F78" stroke-width="2" />
<polygon points="1323,1045 1332,1040.5 1332,1050.5 1323,1055" fill="#3CBFC9"/>
<path d="M1311.5,1039 L1322.5,1044.5 L1333,1039 M1322.5,1044.5 V1056" fill="none" stroke="#2E2F78" stroke-width="2" />
<path d="M1367,1043 Q1366,1036 1358,1036 L1361,1032.5 M1358,1036 L1361,1039.5" fill="none" stroke="#3CBFC9" stroke-width="1.8" />
<path d="M1353,1050 Q1363,1041 1373,1050 Q1363,1059 1353,1050 Z" fill="none" stroke="#2E2F78" stroke-width="1.6" />
<circle cx="1364" cy="1049.5" r="3.4" fill="#2E2F78"/>
<path d="M1400,1043 Q1401,1036 1409,1036 L1406,1032.5 M1409,1036 L1406,1039.5" fill="none" stroke="#BDE8EA" stroke-width="1.8" />
<path d="M1394,1051 Q1404,1042 1414,1051 Q1404,1060 1394,1051 Z" fill="none" stroke="#C5C5D8" stroke-width="1.6" />
<circle cx="1405" cy="1050.5" r="3.4" fill="#C5C5D8"/>
<rect x="1417.5" y="955.5" width="5" height="5" fill="#fff" stroke="#000" stroke-width="1"/>
<polygon points="1423.5,962 1423.5,978 1427,974.5 1430,981 1432.5,980 1429.5,973.5 1434.5,973.5 Z" fill="#fff" stroke="#000" stroke-width="0.9"/>
<path d="M1439,979 V988" stroke="#D0D1D8" stroke-width="2.5"/><circle cx="1438" cy="993" r="4" fill="none" stroke="#B8BAC4" stroke-width="2"/><circle cx="1439" cy="992" r="3.5" fill="none" stroke="#F2F2F4" stroke-width="2"/>
<defs><radialGradient id="cglow" cx="50%" cy="50%" r="50%"><stop offset="0%" stop-color="#A9ABB7" stop-opacity="0.75"/><stop offset="55%" stop-color="#BFC1CC" stop-opacity="0.45"/><stop offset="100%" stop-color="#DCDEE9" stop-opacity="0"/></radialGradient></defs>
<ellipse cx="1496" cy="1040" rx="72" ry="62" fill="url(#cglow)"/>
<polygon points="1555.6,1066.9 1555.6,1070.1 1549.6,1068.5" fill="#5f5f5f"/>
<polygon points="1555.8,1068.6 1554.9,1071.7 1549.4,1069.7" fill="#5f5f5f"/>
<polygon points="1555.5,1070.4 1553.9,1073.2 1548.8,1070.9" fill="#606060"/>
<polygon points="1554.6,1072.2 1552.5,1074.6 1547.8,1072.1" fill="#616161"/>
<polygon points="1553.2,1073.9 1550.8,1076.0 1546.3,1073.3" fill="#636363"/>
<polygon points="1551.3,1075.6 1548.7,1077.4 1544.5,1074.4" fill="#666666"/>
<polygon points="1549.0,1077.2 1546.2,1078.8 1542.4,1075.5" fill="#696969"/>
<polygon points="1546.2,1078.7 1543.3,1080.1 1539.8,1076.5" fill="#6c6c6c"/>
<polygon points="1543.1,1080.1 1540.1,1081.3 1537.0,1077.5" fill="#707070"/>
<polygon points="1539.6,1081.5 1536.5,1082.4 1533.8,1078.4" fill="#757575"/>
<polygon points="1535.7,1082.6 1532.6,1083.5 1530.3,1079.2" fill="#7a7a7a"/>
<polygon points="1531.6,1083.7 1528.5,1084.4 1526.6,1080.0" fill="#7f7f7f"/>
<polygon points="1527.2,1084.7 1524.0,1085.2 1522.6,1080.6" fill="#858585"/>
<polygon points="1522.5,1085.5 1519.4,1086.0 1518.4,1081.2" fill="#8b8b8b"/>
<polygon points="1517.7,1086.2 1514.5,1086.5 1514.1,1081.7" fill="#919191"/>
<polygon points="1512.7,1086.7 1509.5,1087.0 1509.6,1082.0" fill="#979797"/>
<polygon points="1507.6,1087.1 1504.4,1087.3 1505.0,1082.3" fill="#9e9e9e"/>
<polygon points="1502.4,1087.4 1499.2,1087.5 1500.3,1082.4" fill="#a4a4a4"/>
<polygon points="1497.2,1087.5 1494.0,1087.5 1495.6,1082.5" fill="#ababab"/>
<polygon points="1492.0,1087.5 1488.8,1087.4 1490.9,1082.4" fill="#b2b2b2"/>
<polygon points="1486.8,1087.3 1483.6,1087.1 1486.2,1082.3" fill="#b8b8b8"/>
<polygon points="1481.7,1087.0 1478.5,1086.7 1481.6,1082.0" fill="#bfbfbf"/>
<polygon points="1476.7,1086.5 1473.5,1086.2 1477.1,1081.7" fill="#c5c5c5"/>
<polygon points="1471.8,1086.0 1468.7,1085.5 1472.8,1081.2" fill="#cbcbcb"/>
<polygon points="1467.2,1085.2 1464.0,1084.7 1468.6,1080.6" fill="#d1d1d1"/>
<polygon points="1462.7,1084.4 1459.6,1083.7 1464.6,1080.0" fill="#d7d7d7"/>
<polygon points="1458.6,1083.5 1455.5,1082.6 1460.9,1079.2" fill="#dcdcdc"/>
<polygon points="1454.7,1082.4 1451.6,1081.5 1457.4,1078.4" fill="#e1e1e1"/>
<polygon points="1451.1,1081.3 1448.1,1080.1 1454.2,1077.5" fill="#e6e6e6"/>
<polygon points="1447.9,1080.1 1445.0,1078.7 1451.4,1076.5" fill="#eaeaea"/>
<polygon points="1445.0,1078.8 1442.2,1077.2 1448.8,1075.5" fill="#ededed"/>
<polygon points="1442.5,1077.4 1439.9,1075.6 1446.7,1074.4" fill="#f0f0f0"/>
<polygon points="1440.4,1076.0 1438.0,1073.9 1444.9,1073.3" fill="#f3f3f3"/>
<polygon points="1438.7,1074.6 1436.6,1072.2 1443.4,1072.1" fill="#f5f5f5"/>
<polygon points="1437.3,1073.2 1435.7,1070.4 1442.4,1070.9" fill="#f6f6f6"/>
<polygon points="1436.3,1071.7 1435.4,1068.6 1441.8,1069.7" fill="#f7f7f7"/>
<polygon points="1435.6,1070.1 1435.6,1066.9 1441.6,1068.5" fill="#f8f8f8"/>
<polygon points="1435.4,1068.4 1436.3,1065.3 1441.8,1067.3" fill="#f7f7f7"/>
<polygon points="1435.7,1066.6 1437.3,1063.8 1442.4,1066.1" fill="#f6f6f6"/>
<polygon points="1436.6,1064.8 1438.7,1062.4 1443.4,1064.9" fill="#f5f5f5"/>
<polygon points="1438.0,1063.1 1440.4,1061.0 1444.9,1063.7" fill="#f3f3f3"/>
<polygon points="1550.8,1061.0 1553.2,1063.1 1546.3,1063.7" fill="#636363"/>
<polygon points="1552.5,1062.4 1554.6,1064.8 1547.8,1064.9" fill="#616161"/>
<polygon points="1553.9,1063.8 1555.5,1066.6 1548.8,1066.1" fill="#606060"/>
<polygon points="1554.9,1065.3 1555.8,1068.4 1549.4,1067.3" fill="#5f5f5f"/>
<polygon points="1460,1017 1498.7,1008.3 1532.3,1018.5 1493.6,1027.6" fill="#8C8C90"/>
<polygon points="1460,1017 1493.6,1027.6 1493.6,1077.6 1460,1066.4" fill="#A9A9AD"/>
<polygon points="1493.6,1027.6 1532.3,1018.5 1532.3,1068.8 1493.6,1077.6" fill="#A0A0A4"/>
<polygon points="1460,1066.4 1498,1056 1532.3,1068.8 1493.6,1077.6" fill="#8E8E92" opacity="0.7"/>
<polygon points="1464,1052 1468,1054.5 1464,1057" fill="#F2F2F2" opacity="1.00"/>
<polygon points="1471,1052 1475,1054.5 1471,1057" fill="#F2F2F2" opacity="0.80"/>
<polygon points="1478,1052 1482,1054.5 1478,1057" fill="#F2F2F2" opacity="0.60"/>
<polygon points="1486,1052 1490,1054.5 1486,1057" fill="#F2F2F2" opacity="0.40"/>
<polygon points="1528,1052 1524,1054.5 1528,1057" fill="#5A5A5E" opacity="1.00"/>
<polygon points="1521,1052 1517,1054.5 1521,1057" fill="#5A5A5E" opacity="0.80"/>
<polygon points="1514,1052 1510,1054.5 1514,1057" fill="#5A5A5E" opacity="0.60"/>
<polygon points="1506,1052 1502,1054.5 1506,1057" fill="#5A5A5E" opacity="0.40"/>
<path d="M1460,1017 L1498.7,1008.3 L1532.3,1018.5 L1493.6,1027.6 Z M1460,1017 V1066.4 L1493.6,1077.6 L1532.3,1068.8 V1018.5 M1493.6,1027.6 V1077.6" fill="none" stroke="#FFFFFF" stroke-width="1.6" />
<polygon points="1453,1054 1468,1059 1458,1066" fill="#4ADD4A"/>
<polygon points="1526,1061 1547,1055.5 1539,1067" fill="#F06060"/>
<rect x="1548.5" y="1095.0" width="16" height="2.2" fill="#EDEEF2"/>
<rect x="1548.5" y="1100.5" width="16" height="2.2" fill="#EDEEF2"/>
<rect x="1548.5" y="1106.0" width="16" height="2.2" fill="#EDEEF2"/>
<rect x="0" y="0" width="1570" height="33" fill="#2DCFC9" />
<polygon points="862.0,6.0 1024.0,6.0 1030.0,12.0 1030.0,33.0 862.0,33.0" fill="#DDE0EA" stroke="none" stroke-width="1" />
<text x="877.0" y="25.0" font-size="14" fill="#111" font-weight="bold" textLength="123.0" lengthAdjust="spacingAndGlyphs" >Semi-Comp Gains</text>
<rect x="1045" y="19.2" width="12" height="1.6" fill="#E8F8F8" />
<rect x="1050.2" y="14" width="1.6" height="12" fill="#E8F8F8" />
<text x="122.0" y="24.0" font-size="13" fill="#E6FAF8" textLength="77.5" lengthAdjust="spacingAndGlyphs" >22.0.2017.64</text>
<g fill="#fff">
<path d="M44,7 H61 V11 H49 Q47,11 47,13 Q47,14.5 49,14.5 H57 Q62,14.5 62,19.5 Q62,25 57,25 H42 V21 H55 Q57,21 57,19.5 Q57,18.5 55,18.5 H48 Q42,18.5 42,13 Q42,7 48,7 Z" />
<path d="M80,7 V11 H71 Q68,11 68,16 Q68,21 71,21 H80 V25 H70 Q63,25 63,16 Q63,7 70,7 Z" />
<rect x="82" y="13" width="5" height="12" fill="#fff" />
<circle cx="84.5" cy="9" r="2.3"/>
<path d="M95,7 H102 L113,25 H107.5 L104.5,20 H95 L97,16 H102 L98.5,11 L90,25 H84.5 Z" />
</g>
<clipPath id="logoclip"><path d="M22.5,26.5 L18,24 L15,23 L10,19 L10,14 L13,9 L17,4.5 L22,1.5 L25,1.5 L26.5,4 L27.5,8 L28.5,12 L31,16.5 L30,18.5 L26,20 L23.5,22 Z"/></clipPath>
<g clip-path="url(#logoclip)"><rect x="5" y="0" width="30" height="30" fill="#fff"/>
<path d="M17.5,3.5 L22.5,9.5 M13.5,9 L22,17 M10,14.5 L20.5,24 M11,18.5 L15,22" fill="none" stroke="#2DCFC9" stroke-width="1.1" />
<path d="M15.5,12.5 L27.5,8 M11.5,17 L29,13.5 M14,21 L30,17 M17,24 L25,20.5 M19.5,3 L23,1" fill="none" stroke="#2DCFC9" stroke-width="1.1" />
</g>
<rect x="25.5" y="27" width="3" height="1.2" fill="#fff"/>
<rect x="9" y="50" width="2" height="1053" fill="#B5B8C2" />
<polygon points="11.0,50.0 20.0,41.0 292.0,41.0 292.0,81.0 11.0,81.0" fill="#FEFDF8" stroke="none" stroke-width="1" />
<text x="53.0" y="67.0" font-size="15" fill="#2A2A6A" font-weight="bold" textLength="132.0" lengthAdjust="spacingAndGlyphs" >REPORT PREVIEW</text>
<rect x="11" y="81" width="281" height="3" fill="#BEBEBE" />
<polygon points="292.0,39.0 1170.0,39.0 1176.0,45.0 1176.0,70.0 1172.0,74.0 1160.0,74.0 1160.0,84.0 292.0,84.0" fill="#F4F3EF" stroke="none" stroke-width="1" />
<rect x="294" y="43" width="162" height="38" fill="#F0EFEC" />
<rect x="294" y="43" width="2" height="41" fill="#BDBDBD" />
<rect x="294" y="81" width="162" height="3" fill="#BDBDBD" />
<rect x="456" y="43" width="145" height="38" fill="#F0EFEC" />
<rect x="456" y="43" width="2" height="41" fill="#BDBDBD" />
<rect x="456" y="81" width="145" height="3" fill="#BDBDBD" />
<rect x="604" y="43" width="41" height="38" fill="#F0EFEC" />
<rect x="604" y="43" width="2" height="41" fill="#BDBDBD" />
<rect x="604" y="81" width="41" height="3" fill="#BDBDBD" />
<rect x="646" y="43" width="120" height="38" fill="#F0EFEC" />
<rect x="646" y="43" width="2" height="41" fill="#BDBDBD" />
<rect x="646" y="81" width="120" height="3" fill="#BDBDBD" />
<rect x="769" y="43" width="196" height="38" fill="#F0EFEC" />
<rect x="769" y="43" width="2" height="41" fill="#BDBDBD" />
<rect x="769" y="81" width="196" height="3" fill="#BDBDBD" />
<rect x="967" y="43" width="150" height="38" fill="#F0EFEC" />
<rect x="967" y="43" width="2" height="41" fill="#BDBDBD" />
<rect x="967" y="81" width="150" height="3" fill="#BDBDBD" />
<rect x="1120" y="43" width="40" height="38" fill="#F0EFEC" />
<rect x="1120" y="43" width="2" height="41" fill="#BDBDBD" />
<rect x="1120" y="81" width="40" height="3" fill="#BDBDBD" />
<rect x="1160" y="72" width="16" height="3" fill="#C9CACF" />
<text x="1163.0" y="62.0" font-size="10" fill="#7A8AB0" >...</text>
<text x="465.0" y="66.0" font-size="14" fill="#A9A8C8" textLength="50.0" lengthAdjust="spacingAndGlyphs" >Default</text>
<path d="M579,67 L586,60 L593,67" fill="none" stroke="#D5D5D5" stroke-width="1" />
<path d="M306,50 H314 M306,50 V72 H323 V64" fill="none" stroke="#252870" stroke-width="3" />
<path d="M310,57 H316 M310,62 H322 M310,67 H322" fill="none" stroke="#252870" stroke-width="2" />
<circle cx="323" cy="54" r="4" fill="none" stroke="#2DCFC9" stroke-width="2.2" stroke-dasharray="1.6 1"/>
<circle cx="323" cy="54" r="1.3" fill="#2DCFC9"/>
<rect x="345" y="50" width="23" height="4.5" fill="#252870" />
<path d="M348,54 V71 H366 V54" fill="none" stroke="#252870" stroke-width="3" />
<path d="M352,62 H362 M352,66.5 H362" fill="none" stroke="#2DCFC9" stroke-width="2" />
<path d="M391,55 V51 H405 V55" fill="none" stroke="#252870" stroke-width="2.5" />
<path d="M388,67 H385.5 V56 H410 V67 H407" fill="none" stroke="#252870" stroke-width="2.5" />
<rect x="390" y="63" width="16" height="2.5" fill="#252870" />
<path d="M391,63 V71 H405 V63" fill="none" stroke="#252870" stroke-width="2.5" />
<path d="M427,50 H434 M427,50 V72 H444 V62" fill="none" stroke="#252870" stroke-width="3" />
<path d="M431,57 H437 M431,62 H438 M431,67 H443" fill="none" stroke="#252870" stroke-width="2" />
<path d="M438,54 L443,49 L448,54 Z" fill="#2DCFC9" />
<rect x="441.5" y="53" width="3" height="8" fill="#2DCFC9" />
<rect x="616" y="51" width="20" height="20" fill="#fff" stroke="#252870" stroke-width="2.2"/>
<rect x="617.5" y="53.5" width="8" height="3.6" fill="#2DCFC9" />
<rect x="617.5" y="59.2" width="13" height="3.6" fill="#C0203A" />
<rect x="617.5" y="64.9" width="8" height="3.6" fill="#2DCFC9" />
<path d="M617,57.8 H635 M617,63.5 H635" fill="none" stroke="#252870" stroke-width="1.4" />
<path d="M661,50 H674 L679,55 V72 H661 Z" fill="none" stroke="#252870" stroke-width="2.5" />
<path d="M670,53 V69 M663,61 H677" fill="none" stroke="#2DCFC9" stroke-width="2" />
<polygon points="666.5,54.5 670,49.5 673.5,54.5" fill="#2DCFC9"/><polygon points="666.5,67.5 670,72.5 673.5,67.5" fill="#2DCFC9"/>
<polygon points="663.5,57.5 659.5,61 663.5,64.5" fill="#2DCFC9"/><polygon points="676.5,57.5 680.5,61 676.5,64.5" fill="#2DCFC9"/>
<path d="M701,50 H713 L718,55 V72 H701 Z" fill="none" stroke="#252870" stroke-width="2.5" />
<path d="M704,61 H715" fill="none" stroke="#2DCFC9" stroke-width="2" />
<polygon points="704.5,57.5 700,61 704.5,64.5" fill="#2DCFC9"/><polygon points="714.5,57.5 719,61 714.5,64.5" fill="#2DCFC9"/>
<circle cx="746" cy="59" r="8.5" fill="none" stroke="#252870" stroke-width="2.8"/>
<path d="M752,65 L759,72" fill="none" stroke="#252870" stroke-width="3.5" />
<text x="746.0" y="62.0" font-size="7" fill="#2DCFC9" font-weight="bold" text-anchor="middle" textLength="12.0" lengthAdjust="spacingAndGlyphs" >100</text>
<text x="781.0" y="66.0" font-size="14" fill="#2A2A6A" textLength="28.0" lengthAdjust="spacingAndGlyphs" >90%</text>
<rect x="861" y="60.3" width="85" height="1.2" fill="#C8C8C8" />
<rect x="836" y="59.8" width="26" height="2.4" fill="#252870" />
<circle cx="867" cy="61" r="5.8" fill="#fff" stroke="#252870" stroke-width="2.4"/>
<path d="M1132.5,52.5 L1149.5,69.5 M1149.5,52.5 L1132.5,69.5" fill="none" stroke="#252870" stroke-width="2.6" />
<rect x="11" y="84" width="1149" height="2" fill="#E6E6E6" />
<rect x="11" y="86" width="1133" height="1013" fill="#A3A6B3" />
<rect x="11" y="86" width="8" height="1013" fill="#B9BCC6" />
<rect x="1144" y="86" width="12" height="1013" fill="#C4C4C4" />
<rect x="1145" y="541" width="11" height="107" fill="#FFFFFF" />
<rect x="1156" y="86" width="4" height="1013" fill="#DADADA" />
<rect x="19" y="86" width="1117" height="481" fill="#FFFFFF" />
<path d="M19.5,86 V566.5 H1135.5 V86" fill="none" stroke="#111" stroke-width="1" />
<rect x="19" y="580" width="1117" height="540" fill="#FFFFFF" />
<path d="M19.5,1120 V580.5 H1135.5 V1120" fill="none" stroke="#111" stroke-width="1" />
<rect x="0" y="83" width="9" height="20" fill="#C9C9C9" />
<text x="4.5" y="97.0" font-size="12" fill="#118888" font-weight="bold" text-anchor="middle" font-family="Liberation Serif" >i</text>
<polygon points="1.0,101.0 5.0,97.0 9.0,101.0" fill="#E00" stroke="none" stroke-width="1" />
<text x="1392.7" y="63.0" font-size="14" fill="#4A4A8A" textLength="23.0" lengthAdjust="spacingAndGlyphs" >LC3</text>
<path d="M1421,54.5 L1428.5,62 L1436,54.5" fill="none" stroke="#6A6A6A" stroke-width="1.2" />
<rect x="1473.5" y="47.5" width="17" height="17" fill="none" stroke="#C0203A" stroke-width="3.5"/>
<circle cx="1474.5" cy="48.8" r="4" fill="#DEE0EA" stroke="#2DCFC9" stroke-width="2.2"/>
<path d="M1525,45 V55 Q1525,60 1529,60 Q1533,60 1533,55 V45" fill="none" stroke="#2DCFC9" stroke-width="3.6" />
<path d="M1515,55 V66 H1526 M1515,66 L1522,59" fill="none" stroke="#2A2A70" stroke-width="1.5" />
<polygon points="1513,57 1515,53 1517,57" fill="#2A2A70"/><polygon points="1524,64 1528,66 1524,68" fill="#2A2A70"/>
<path d="M1558,58 V66 M1558,62 H1570" fill="none" stroke="#2DCFC9" stroke-width="3" />
<text x="1565.0" y="53.0" font-size="9" fill="#2A2A70" font-weight="bold" >m</text>
<text x="73.0" y="109.3" font-size="15" fill="#000" font-weight="bold" textLength="248.0" lengthAdjust="spacingAndGlyphs" >Lateral Torsional Buckling check</text>
<text x="73.0" y="128.3" font-size="15" fill="#000" textLength="476.0" lengthAdjust="spacingAndGlyphs" >According to EN 1993-1-1 article 6.3.2.1 &amp; 6.3.2.3 and formula (6.54)</text>
<text x="73.0" y="170.4" font-size="12.6" fill="#484848" textLength="61.0" lengthAdjust="spacingAndGlyphs" >M<tspan font-size="8.6" dy="3.5">cr</tspan><tspan dy="-3.5"> = C</tspan><tspan font-size="8.6" dy="3.5">1</tspan><tspan dy="-3.5"> ×</tspan></text>
<line x1="140" y1="166.5" x2="201" y2="166.5" stroke="#555" stroke-width="1.1" />
<text x="140.5" y="161.0" font-size="12.6" fill="#484848" textLength="60.0" lengthAdjust="spacingAndGlyphs" >π<tspan font-size="8.6" dy="-4.8">2</tspan><tspan dy="4.8"> × E × I</tspan><tspan font-size="8.6" dy="3.5">z</tspan></text>
<text x="163.0" y="181.0" font-size="12.6" fill="#484848" textLength="15.0" lengthAdjust="spacingAndGlyphs" >l<tspan font-size="8.6" dy="-4.8">2</tspan><tspan font-size="8.6" dy="8.3" dx="-4.7">LT</tspan></text>
<text x="207.0" y="170.4" font-size="12.6" fill="#484848" textLength="7.0" lengthAdjust="spacingAndGlyphs" >×</text>
<path d="M226.5,142.5 H222.5 V190.8 H226.5" fill="none" stroke="#555" stroke-width="1.3" />
<path d="M228.5,168.5 L231.0,165.5 L234.5,185 L240.6,144 H518.6" fill="none" stroke="#555" stroke-width="1.1" />
<path d="M249.7,150.6 Q241.7,167.05 249.7,183.5" fill="none" stroke="#555" stroke-width="1.1" />
<line x1="252.5" y1="167" x2="266" y2="167" stroke="#555" stroke-width="1.1" />
<text x="255.5" y="161.0" font-size="12.6" fill="#484848" textLength="6.5" lengthAdjust="spacingAndGlyphs" >k</text>
<text x="253.0" y="178.6" font-size="12.6" fill="#484848" textLength="12.5" lengthAdjust="spacingAndGlyphs" >k<tspan font-size="8.6" dy="3.5">w</tspan></text>
<path d="M266.6,150.6 Q274.6,167.05 266.6,183.5" fill="none" stroke="#555" stroke-width="1.1" />
<text x="276.0" y="155.5" font-size="8.5" fill="#484848" textLength="5.0" lengthAdjust="spacingAndGlyphs" >2</text>
<text x="285.5" y="170.4" font-size="12.6" fill="#484848" textLength="7.7" lengthAdjust="spacingAndGlyphs" >×</text>
<line x1="299.5" y1="167" x2="310" y2="167" stroke="#555" stroke-width="1.1" />
<text x="300.0" y="161.0" font-size="12.6" fill="#484848" textLength="9.5" lengthAdjust="spacingAndGlyphs" >I<tspan font-size="8.6" dy="3.5">w</tspan></text>
<text x="300.0" y="179.0" font-size="12.6" fill="#484848" textLength="9.5" lengthAdjust="spacingAndGlyphs" >I<tspan font-size="8.6" dy="3.5">z</tspan></text>
<text x="314.0" y="170.4" font-size="12.6" fill="#484848" textLength="9.3" lengthAdjust="spacingAndGlyphs" >+</text>
<line x1="328.2" y1="167" x2="391.3" y2="167" stroke="#555" stroke-width="1.1" />
<text x="328.7" y="161.0" font-size="12.6" fill="#484848" textLength="62.1" lengthAdjust="spacingAndGlyphs" >l<tspan font-size="8.6" dy="-4.8">2</tspan><tspan font-size="8.6" dy="8.3" dx="-4.7">LT</tspan><tspan dy="-3.5"> × G × I</tspan><tspan font-size="8.6" dy="3.5">t</tspan></text>
<text x="328.7" y="179.0" font-size="12.6" fill="#484848" textLength="62.1" lengthAdjust="spacingAndGlyphs" >π<tspan font-size="8.6" dy="-4.8">2</tspan><tspan dy="4.8"> × E × I</tspan><tspan font-size="8.6" dy="3.5">z</tspan></text>
<text x="396.0" y="170.4" font-size="12.6" fill="#484848" textLength="120.4" lengthAdjust="spacingAndGlyphs" >+ (C<tspan font-size="8.6" dy="3.5">2</tspan><tspan dy="-3.5"> × z</tspan><tspan font-size="8.6" dy="3.5">g</tspan><tspan dy="-3.5"> − C</tspan><tspan font-size="8.6" dy="3.5">3</tspan><tspan dy="-3.5"> × z</tspan><tspan font-size="8.6" dy="3.5">j</tspan><tspan dy="-3.5">)</tspan><tspan font-size="8.6" dy="-4.8">2</tspan></text>
<text x="523.0" y="170.4" font-size="12.6" fill="#484848" textLength="114.7" lengthAdjust="spacingAndGlyphs" >− (C<tspan font-size="8.6" dy="3.5">2</tspan><tspan dy="-3.5"> × z</tspan><tspan font-size="8.6" dy="3.5">g</tspan><tspan dy="-3.5"> − C</tspan><tspan font-size="8.6" dy="3.5">3</tspan><tspan dy="-3.5"> × z</tspan><tspan font-size="8.6" dy="3.5">j</tspan><tspan dy="-3.5">)</tspan></text>
<path d="M639,142 H643 V190.6 H639" fill="none" stroke="#555" stroke-width="1.3" />
<text x="650.7" y="170.4" font-size="12.6" fill="#484848" textLength="39.0" lengthAdjust="spacingAndGlyphs" >= 1,77</text>
<text x="73.0" y="221.0" font-size="12.6" fill="#484848" textLength="9.0" lengthAdjust="spacingAndGlyphs" >×</text>
<line x1="87.7" y1="216.8" x2="316" y2="216.8" stroke="#555" stroke-width="1.1" />
<text x="89.0" y="210.5" font-size="12.6" fill="#484848" textLength="226.0" lengthAdjust="spacingAndGlyphs" >π<tspan font-size="8.6" dy="-4.8">2</tspan><tspan dy="4.8"> × 210000,0[MPa] × 6,9900 · 10</tspan><tspan font-size="8.6" dy="-4.8">−5</tspan><tspan dy="4.8">[m</tspan><tspan font-size="8.6" dy="-4.8">4</tspan><tspan dy="4.8">]</tspan></text>
<text x="173.7" y="229.6" font-size="12.6" fill="#484848" textLength="55.3" lengthAdjust="spacingAndGlyphs" >3,600[m]<tspan font-size="8.6" dy="-4.8">2</tspan></text>
<text x="73.0" y="269.5" font-size="12.6" fill="#484848" textLength="9.0" lengthAdjust="spacingAndGlyphs" >×</text>
<path d="M93.3,241.4 H89.3 V289 H93.3" fill="none" stroke="#555" stroke-width="1.3" />
<path d="M92,267.5 L94.5,264.5 L98,284 L104.6,243 H765.6" fill="none" stroke="#555" stroke-width="1.1" />
<path d="M117,248 Q110,265.5 117,283" fill="none" stroke="#555" stroke-width="1.1" />
<line x1="119" y1="265.3" x2="146" y2="265.3" stroke="#555" stroke-width="1.1" />
<text x="119.5" y="260.5" font-size="12.6" fill="#484848" textLength="26.0" lengthAdjust="spacingAndGlyphs" >1,00</text>
<text x="119.5" y="278.0" font-size="12.6" fill="#484848" textLength="26.0" lengthAdjust="spacingAndGlyphs" >1,00</text>
<path d="M148,248 Q156,265.5 148,283" fill="none" stroke="#555" stroke-width="1.1" />
<text x="157.0" y="253.5" font-size="8.5" fill="#484848" textLength="4.5" lengthAdjust="spacingAndGlyphs" >2</text>
<text x="165.0" y="269.5" font-size="12.6" fill="#484848" textLength="7.0" lengthAdjust="spacingAndGlyphs" >×</text>
<line x1="177.8" y1="265.3" x2="276.6" y2="265.3" stroke="#555" stroke-width="1.1" />
<text x="178.3" y="260.5" font-size="12.6" fill="#484848" textLength="97.8" lengthAdjust="spacingAndGlyphs" >1,5124 · 10<tspan font-size="8.6" dy="-4.8">−6</tspan><tspan dy="4.8">[m</tspan><tspan font-size="8.6" dy="-4.8">6</tspan><tspan dy="4.8">]</tspan></text>
<text x="178.3" y="278.0" font-size="12.6" fill="#484848" textLength="97.8" lengthAdjust="spacingAndGlyphs" >6,9900 · 10<tspan font-size="8.6" dy="-4.8">−5</tspan><tspan dy="4.8">[m</tspan><tspan font-size="8.6" dy="-4.8">4</tspan><tspan dy="4.8">]</tspan></text>
<text x="283.0" y="269.5" font-size="12.6" fill="#484848" textLength="8.0" lengthAdjust="spacingAndGlyphs" >+</text>
<line x1="295.7" y1="265.3" x2="560" y2="265.3" stroke="#555" stroke-width="1.1" />
<text x="296.0" y="260.5" font-size="12.6" fill="#484848" textLength="263.0" lengthAdjust="spacingAndGlyphs" >3,600[m]<tspan font-size="8.6" dy="-4.8">2</tspan><tspan dy="4.8"> × 80769,2[MPa] × 1,0800 · 10</tspan><tspan font-size="8.6" dy="-4.8">−6</tspan><tspan dy="4.8">[m</tspan><tspan font-size="8.6" dy="-4.8">4</tspan><tspan dy="4.8">]</tspan></text>
<text x="314.8" y="278.0" font-size="12.6" fill="#484848" textLength="226.2" lengthAdjust="spacingAndGlyphs" >π<tspan font-size="8.6" dy="-4.8">2</tspan><tspan dy="4.8"> × 210000,0[MPa] × 6,9900 · 10</tspan><tspan font-size="8.6" dy="-4.8">−5</tspan><tspan dy="4.8">[m</tspan><tspan font-size="8.6" dy="-4.8">4</tspan><tspan dy="4.8">]</tspan></text>
<text x="565.0" y="269.5" font-size="12.6" fill="#484848" textLength="199.0" lengthAdjust="spacingAndGlyphs" >+ (0,00 × 0[mm] − 1,00 × 0[mm])<tspan font-size="8.6" dy="-4.8">2</tspan></text>
<text x="768.5" y="269.5" font-size="12.6" fill="#484848" textLength="193.5" lengthAdjust="spacingAndGlyphs" >− (0,00 × 0[mm] − 1,00 × 0[mm])</text>
<path d="M962.3,241 H966.3 V289 H962.3" fill="none" stroke="#555" stroke-width="1.3" />
<text x="73.0" y="308.0" font-size="12.6" fill="#484848" textLength="92.0" lengthAdjust="spacingAndGlyphs" >= 3394,91[kNm]</text>
<text x="73.0" y="353.7" font-size="12.6" fill="#484848" textLength="48.0" lengthAdjust="spacingAndGlyphs" >λ<tspan font-size="8.6" dy="3.5">rel,LT</tspan><tspan dy="-3.5"> =</tspan></text>
<path d="M127,354.25 L129.5,351.25 L133,370 L141.5,330.5 H202.7" fill="none" stroke="#555" stroke-width="1.1" />
<line x1="141.5" y1="349.6" x2="202.7" y2="349.6" stroke="#555" stroke-width="1.1" />
<text x="143.0" y="343.5" font-size="12.6" fill="#484848" textLength="58.0" lengthAdjust="spacingAndGlyphs" >W<tspan font-size="8.6" dy="3.5">pl,y</tspan><tspan dy="-3.5"> × f</tspan><tspan font-size="8.6" dy="3.5">y</tspan></text>
<text x="161.0" y="364.0" font-size="12.6" fill="#484848" textLength="23.0" lengthAdjust="spacingAndGlyphs" >M<tspan font-size="8.6" dy="3.5">cr</tspan></text>
<text x="206.0" y="353.7" font-size="12.6" fill="#484848" textLength="11.0" lengthAdjust="spacingAndGlyphs" >=</text>
<path d="M223,354.25 L225.5,351.25 L229,370 L237.3,330.5 H443.2" fill="none" stroke="#555" stroke-width="1.1" />
<line x1="237.3" y1="349.6" x2="443.2" y2="349.6" stroke="#555" stroke-width="1.1" />
<text x="239.4" y="343.5" font-size="12.6" fill="#484848" textLength="201.6" lengthAdjust="spacingAndGlyphs" >1,6292 · 10<tspan font-size="8.6" dy="-4.8">−3</tspan><tspan dy="4.8">[m</tspan><tspan font-size="8.6" dy="-4.8">3</tspan><tspan dy="4.8">] × 235,0[MPa]</tspan></text>
<text x="294.4" y="364.0" font-size="12.6" fill="#484848" textLength="89.6" lengthAdjust="spacingAndGlyphs" >3394,91[kNm]</text>
<text x="447.0" y="353.7" font-size="12.6" fill="#484848" textLength="43.0" lengthAdjust="spacingAndGlyphs" >= 0,34</text>
<text x="73.0" y="398.6" font-size="15" fill="#000" font-weight="bold" textLength="40.0" lengthAdjust="spacingAndGlyphs" >Note:</text>
<text x="120.3" y="398.6" font-size="15" fill="#000" textLength="565.5" lengthAdjust="spacingAndGlyphs" >The slenderness or bending moment is such that Lateral Torsional Buckling effects</text>
<text x="73.0" y="417.0" font-size="15" fill="#000" textLength="411.0" lengthAdjust="spacingAndGlyphs" >may be ignored according to EN 1993-1-1 article 6.3.2.2(4).</text>
<text x="73.0" y="436.0" font-size="15" fill="#000" font-weight="bold" textLength="40.0" lengthAdjust="spacingAndGlyphs" >Note:</text>
<text x="119.0" y="436.0" font-size="15" fill="#000" textLength="497.5" lengthAdjust="spacingAndGlyphs" >C parameters are determined according to ECCS 119 2006 / Galea 2002.</text>
<rect x="72.5" y="634" width="405.5" height="17.5" fill="#7F7F7F" />
<text x="79.7" y="648.0" font-size="14.5" fill="#FFFFFF" font-weight="bold" textLength="201.8" lengthAdjust="spacingAndGlyphs" >LTB additional parameters</text>
<text x="77.8" y="665.6" font-size="14.5" fill="#000" textLength="139.9" lengthAdjust="spacingAndGlyphs" >Minimal  z coordinate</text>
<text x="239.5" y="665.6" font-size="14.5" fill="#000" textLength="25.9" lengthAdjust="spacingAndGlyphs" >z<tspan font-size="9.9" dy="4.1">min</tspan></text>
<text x="289.2" y="665.6" font-size="14.5" fill="#000" textLength="30.2" lengthAdjust="spacingAndGlyphs" >-155</text>
<text x="425.0" y="665.6" font-size="14.5" fill="#000" textLength="25.6" lengthAdjust="spacingAndGlyphs" >mm</text>
<text x="77.8" y="684.2" font-size="14.5" fill="#000" textLength="143.9" lengthAdjust="spacingAndGlyphs" >Maximal  z coordinate</text>
<text x="239.5" y="684.2" font-size="14.5" fill="#000" textLength="28.0" lengthAdjust="spacingAndGlyphs" >z<tspan font-size="9.9" dy="4.1">max</tspan></text>
<text x="289.2" y="684.2" font-size="14.5" fill="#000" textLength="25.4" lengthAdjust="spacingAndGlyphs" >155</text>
<text x="425.0" y="684.2" font-size="14.5" fill="#000" textLength="25.6" lengthAdjust="spacingAndGlyphs" >mm</text>
<text x="77.8" y="702.8" font-size="14.5" fill="#000" textLength="121.4" lengthAdjust="spacingAndGlyphs" >End moment ratio</text>
<text x="240.8" y="702.8" font-size="14.5" fill="#000" >ψ</text>
<text x="289.2" y="702.8" font-size="14.5" fill="#000" textLength="30.0" lengthAdjust="spacingAndGlyphs" >0,00</text>
<text x="77.8" y="721.4" font-size="14.5" fill="#000" textLength="141.3" lengthAdjust="spacingAndGlyphs" >Equivalent point load</text>
<text x="240.8" y="721.4" font-size="14.5" fill="#000" >F</text>
<text x="289.2" y="721.4" font-size="14.5" fill="#000" textLength="30.0" lengthAdjust="spacingAndGlyphs" >0,00</text>
<text x="425.0" y="721.4" font-size="14.5" fill="#000" textLength="17.6" lengthAdjust="spacingAndGlyphs" >kN</text>
<text x="77.8" y="740.0" font-size="14.5" fill="#000" textLength="130.2" lengthAdjust="spacingAndGlyphs" >Equivalent line load</text>
<text x="240.8" y="740.0" font-size="14.5" fill="#000" >q</text>
<text x="289.2" y="740.0" font-size="14.5" fill="#000" textLength="30.0" lengthAdjust="spacingAndGlyphs" >0,00</text>
<text x="425.0" y="740.0" font-size="14.5" fill="#000" textLength="36.3" lengthAdjust="spacingAndGlyphs" >kN/m</text>
<text x="77.8" y="758.6" font-size="14.5" fill="#000" textLength="118.2" lengthAdjust="spacingAndGlyphs" >Difference with M</text>
<text x="289.2" y="758.6" font-size="14.5" fill="#000" textLength="30.0" lengthAdjust="spacingAndGlyphs" >0,00</text>
<text x="425.0" y="758.6" font-size="14.5" fill="#000" textLength="30.2" lengthAdjust="spacingAndGlyphs" >kNm</text>
<text x="77.8" y="777.2" font-size="14.5" fill="#000" textLength="114.5" lengthAdjust="spacingAndGlyphs" >Difference with F</text>
<text x="289.2" y="777.2" font-size="14.5" fill="#000" textLength="30.0" lengthAdjust="spacingAndGlyphs" >0,00</text>
<text x="425.0" y="777.2" font-size="14.5" fill="#000" textLength="30.2" lengthAdjust="spacingAndGlyphs" >kNm</text>
<text x="77.8" y="795.8" font-size="14.5" fill="#000" textLength="116.2" lengthAdjust="spacingAndGlyphs" >Difference with q</text>
<text x="289.2" y="795.8" font-size="14.5" fill="#000" textLength="30.0" lengthAdjust="spacingAndGlyphs" >0,00</text>
<text x="425.0" y="795.8" font-size="14.5" fill="#000" textLength="30.2" lengthAdjust="spacingAndGlyphs" >kNm</text>
<text x="77.8" y="814.4" font-size="14.5" fill="#000" textLength="132.2" lengthAdjust="spacingAndGlyphs" >Resulting load type</text>
<text x="289.2" y="814.4" font-size="14.5" fill="#000" textLength="114.1" lengthAdjust="spacingAndGlyphs" >linear  moment M</text>
<g stroke="#111" stroke-width="1.3" fill="none">
<rect x="72.5" y="634" width="405.5" height="185.20000000000005"/>
<line x1="72.5" y1="651.5" x2="478" y2="651.5"/>
<line x1="72.5" y1="670.1" x2="478" y2="670.1"/>
<line x1="72.5" y1="688.7" x2="478" y2="688.7"/>
<line x1="72.5" y1="707.3" x2="478" y2="707.3"/>
<line x1="72.5" y1="725.9" x2="478" y2="725.9"/>
<line x1="72.5" y1="744.5" x2="478" y2="744.5"/>
<line x1="72.5" y1="763.1" x2="478" y2="763.1"/>
<line x1="72.5" y1="781.7" x2="478" y2="781.7"/>
<line x1="72.5" y1="800.3" x2="478" y2="800.3"/>
<line x1="72.5" y1="818.9" x2="478" y2="818.9"/>
<line x1="238.2" y1="651.5" x2="238.2" y2="819.2"/>
<line x1="283.6" y1="651.5" x2="283.6" y2="819.2"/>
<line x1="420.6" y1="651.5" x2="420.6" y2="819.2"/>
</g>
<text x="73.0" y="845.0" font-size="15" fill="#000" font-weight="bold" textLength="286.3" lengthAdjust="spacingAndGlyphs" >Bending and axial compression check</text>
<text x="73.0" y="863.5" font-size="15" fill="#000" textLength="444.5" lengthAdjust="spacingAndGlyphs" >According to EN 1993-1-1 article 6.3.3 and formula (6.61),(6.62)</text>
<text x="73.0" y="881.8" font-size="15" fill="#000" textLength="458.0" lengthAdjust="spacingAndGlyphs" >Maximum moment M<tspan font-size="10.2" dy="4.2">y,Ed</tspan><tspan dy="-4.2"> is derived from beam B4 position 3,600 m.</tspan></text>
<text x="73.0" y="900.0" font-size="15" fill="#000" textLength="458.0" lengthAdjust="spacingAndGlyphs" >Maximum moment M<tspan font-size="10.2" dy="4.2">z,Ed</tspan><tspan dy="-4.2"> is derived from beam B4 position 3,600 m.</tspan></text>
<text x="73.0" y="938.5" font-size="12.6" fill="#484848" textLength="40.3" lengthAdjust="spacingAndGlyphs" >N<tspan font-size="8.6" dy="3.5">cr,y</tspan><tspan dy="-3.5"> =</tspan></text>
<line x1="120.2" y1="934.4" x2="190" y2="934.4" stroke="#555" stroke-width="1.1" />
<text x="121.0" y="928.0" font-size="12.6" fill="#484848" textLength="68.0" lengthAdjust="spacingAndGlyphs" >π<tspan font-size="8.6" dy="-4.8">2</tspan><tspan dy="4.8"> × E × I</tspan><tspan font-size="8.6" dy="3.5">y</tspan></text>
<text x="145.0" y="949.0" font-size="12.6" fill="#484848" textLength="21.0" lengthAdjust="spacingAndGlyphs" >l<tspan font-size="8.6" dy="-4.8">2</tspan><tspan font-size="8.6" dy="8.3" dx="-4.7">cr,y</tspan></text>
<text x="193.5" y="938.5" font-size="12.6" fill="#484848" textLength="12.5" lengthAdjust="spacingAndGlyphs" >=</text>
<line x1="211.4" y1="934.4" x2="468.7" y2="934.4" stroke="#555" stroke-width="1.1" />
<text x="212.0" y="928.0" font-size="12.6" fill="#484848" textLength="256.0" lengthAdjust="spacingAndGlyphs" >π<tspan font-size="8.6" dy="-4.8">2</tspan><tspan dy="4.8"> × 210000,0[MPa] × 2,2900 · 10</tspan><tspan font-size="8.6" dy="-4.8">−4</tspan><tspan dy="4.8">[m</tspan><tspan font-size="8.6" dy="-4.8">4</tspan><tspan dy="4.8">]</tspan></text>
<text x="307.7" y="949.0" font-size="12.6" fill="#484848" textLength="63.6" lengthAdjust="spacingAndGlyphs" >8,928[m]<tspan font-size="8.6" dy="-4.8">2</tspan></text>
<text x="472.8" y="938.5" font-size="12.6" fill="#484848" textLength="92.9" lengthAdjust="spacingAndGlyphs" >= 5953,91[kN]</text>
<text x="73.0" y="989.8" font-size="12.6" fill="#484848" textLength="41.5" lengthAdjust="spacingAndGlyphs" >N<tspan font-size="8.6" dy="3.5">cr,z</tspan><tspan dy="-3.5"> =</tspan></text>
<line x1="120.5" y1="984.6" x2="188.8" y2="984.6" stroke="#555" stroke-width="1.1" />
<text x="121.0" y="979.5" font-size="12.6" fill="#484848" textLength="67.0" lengthAdjust="spacingAndGlyphs" >π<tspan font-size="8.6" dy="-4.8">2</tspan><tspan dy="4.8"> × E × I</tspan><tspan font-size="8.6" dy="3.5">z</tspan></text>
<text x="144.0" y="999.0" font-size="12.6" fill="#484848" textLength="21.0" lengthAdjust="spacingAndGlyphs" >l<tspan font-size="8.6" dy="-4.8">2</tspan><tspan font-size="8.6" dy="8.3" dx="-4.7">cr,z</tspan></text>
<text x="194.3" y="989.8" font-size="12.6" fill="#484848" textLength="11.7" lengthAdjust="spacingAndGlyphs" >=</text>
<line x1="211.3" y1="984.6" x2="468" y2="984.6" stroke="#555" stroke-width="1.1" />
<text x="212.0" y="979.5" font-size="12.6" fill="#484848" textLength="255.0" lengthAdjust="spacingAndGlyphs" >π<tspan font-size="8.6" dy="-4.8">2</tspan><tspan dy="4.8"> × 210000,0[MPa] × 6,9900 · 10</tspan><tspan font-size="8.6" dy="-4.8">−5</tspan><tspan dy="4.8">[m</tspan><tspan font-size="8.6" dy="-4.8">4</tspan><tspan dy="4.8">]</tspan></text>
<text x="308.0" y="999.0" font-size="12.6" fill="#484848" textLength="63.0" lengthAdjust="spacingAndGlyphs" >2,757[m]<tspan font-size="8.6" dy="-4.8">2</tspan></text>
<text x="472.7" y="989.8" font-size="12.6" fill="#484848" textLength="100.0" lengthAdjust="spacingAndGlyphs" >= 19062,16[kN]</text>
<text x="73.0" y="1041.0" font-size="12.6" fill="#484848" textLength="41.5" lengthAdjust="spacingAndGlyphs" >N<tspan font-size="8.6" dy="3.5">cr,T</tspan><tspan dy="-3.5"> =</tspan></text>
<line x1="122.4" y1="1036" x2="132.3" y2="1036" stroke="#555" stroke-width="1.1" />
<text x="124.0" y="1030.8" font-size="12.6" fill="#484848" textLength="6.0" lengthAdjust="spacingAndGlyphs" >1</text>
<text x="123.0" y="1050.0" font-size="12.6" fill="#484848" textLength="9.0" lengthAdjust="spacingAndGlyphs" >i<tspan font-size="8.6" dy="-4.8">2</tspan><tspan font-size="8.6" dy="8.3" dx="-4.7">0</tspan></text>
<text x="138.2" y="1041.0" font-size="12.6" fill="#484848" textLength="7.8" lengthAdjust="spacingAndGlyphs" >×</text>
<path d="M159,1017 Q151,1036.0 159,1055" fill="none" stroke="#555" stroke-width="1.1" />
<text x="162.0" y="1041.0" font-size="12.6" fill="#484848" textLength="51.3" lengthAdjust="spacingAndGlyphs" >G × I<tspan font-size="8.6" dy="3.5">t</tspan><tspan dy="-3.5"> +</tspan></text>
<line x1="218.4" y1="1036" x2="290.3" y2="1036" stroke="#555" stroke-width="1.1" />
<text x="219.0" y="1030.8" font-size="12.6" fill="#484848" textLength="71.0" lengthAdjust="spacingAndGlyphs" >π<tspan font-size="8.6" dy="-4.8">2</tspan><tspan dy="4.8"> × E × I</tspan><tspan font-size="8.6" dy="3.5">w</tspan></text>
<text x="246.0" y="1050.0" font-size="12.6" fill="#484848" textLength="16.0" lengthAdjust="spacingAndGlyphs" >l<tspan font-size="8.6" dy="-4.8">2</tspan><tspan font-size="8.6" dy="8.3" dx="-4.7">cr</tspan></text>
<path d="M291.3,1017 Q299,1036.0 291.3,1055" fill="none" stroke="#555" stroke-width="1.1" />
<text x="306.0" y="1041.0" font-size="12.6" fill="#484848" textLength="12.0" lengthAdjust="spacingAndGlyphs" >=</text>
<line x1="323.9" y1="1036" x2="383.9" y2="1036" stroke="#555" stroke-width="1.1" />
<text x="350.0" y="1030.8" font-size="12.6" fill="#484848" textLength="7.0" lengthAdjust="spacingAndGlyphs" >1</text>
<text x="324.5" y="1050.0" font-size="12.6" fill="#484848" textLength="59.0" lengthAdjust="spacingAndGlyphs" >155[mm]<tspan font-size="8.6" dy="-4.8">2</tspan></text>
<text x="389.0" y="1041.0" font-size="12.6" fill="#484848" textLength="8.0" lengthAdjust="spacingAndGlyphs" >×</text>
<path d="M411.8,1017 Q403.8,1036.0 411.8,1055" fill="none" stroke="#555" stroke-width="1.1" />
<text x="414.0" y="1041.0" font-size="12.6" fill="#484848" textLength="229.0" lengthAdjust="spacingAndGlyphs" >80769,2[MPa] × 1,0800 · 10<tspan font-size="8.6" dy="-4.8">−6</tspan><tspan dy="4.8">[m</tspan><tspan font-size="8.6" dy="-4.8">4</tspan><tspan dy="4.8">] +</tspan></text>
<line x1="650.7" y1="1036" x2="906.7" y2="1036" stroke="#555" stroke-width="1.1" />
<text x="651.0" y="1031.3" font-size="12.6" fill="#484848" textLength="255.0" lengthAdjust="spacingAndGlyphs" >π<tspan font-size="8.6" dy="-4.8">2</tspan><tspan dy="4.8"> × 210000,0[MPa] × 1,5124 · 10</tspan><tspan font-size="8.6" dy="-4.8">−6</tspan><tspan dy="4.8">[m</tspan><tspan font-size="8.6" dy="-4.8">6</tspan><tspan dy="4.8">]</tspan></text>
<text x="746.0" y="1051.0" font-size="12.6" fill="#484848" textLength="62.5" lengthAdjust="spacingAndGlyphs" >3,600[m]<tspan font-size="8.6" dy="-4.8">2</tspan></text>
<path d="M906.7,1017 Q915,1036.0 906.7,1055" fill="none" stroke="#555" stroke-width="1.1" />
<text x="73.0" y="1076.0" font-size="12.6" fill="#484848" textLength="99.0" lengthAdjust="spacingAndGlyphs" >= 13652,59[kN]</text>
<text x="250.0" y="1106.5" font-size="12.6" fill="#484848" textLength="170.0" lengthAdjust="spacingAndGlyphs" >0,26 × (1 − 0,33) × |N<tspan font-size="8.6" dy="3.5">Ed</tspan><tspan dy="-3.5">|</tspan></text>
<text x="584.0" y="1106.5" font-size="12.6" fill="#484848" textLength="231.0" lengthAdjust="spacingAndGlyphs" >0,26 × (0,00 − 0,33) × |725,40[kN]|</text>
<rect x="0" y="1099" width="1160" height="19" fill="#DEE0EA" />
<rect x="11" y="1099" width="597" height="4.5" fill="#B8B8B8" />
<rect x="608" y="1099" width="552" height="4.5" fill="#ABAEBC" />
<rect x="15" y="1103" width="593" height="15" fill="#E8E8E8" />
<rect x="9" y="1099" width="2" height="4.5" fill="#B5B8C2" />
<rect x="14" y="1103" width="1.2" height="15" fill="#B8BAC4" />
<text x="266.0" y="1113.0" font-size="14" fill="#5A6A8A" textLength="92.0" lengthAdjust="spacingAndGlyphs" >INPUT PANEL</text>
</svg></body></html>
